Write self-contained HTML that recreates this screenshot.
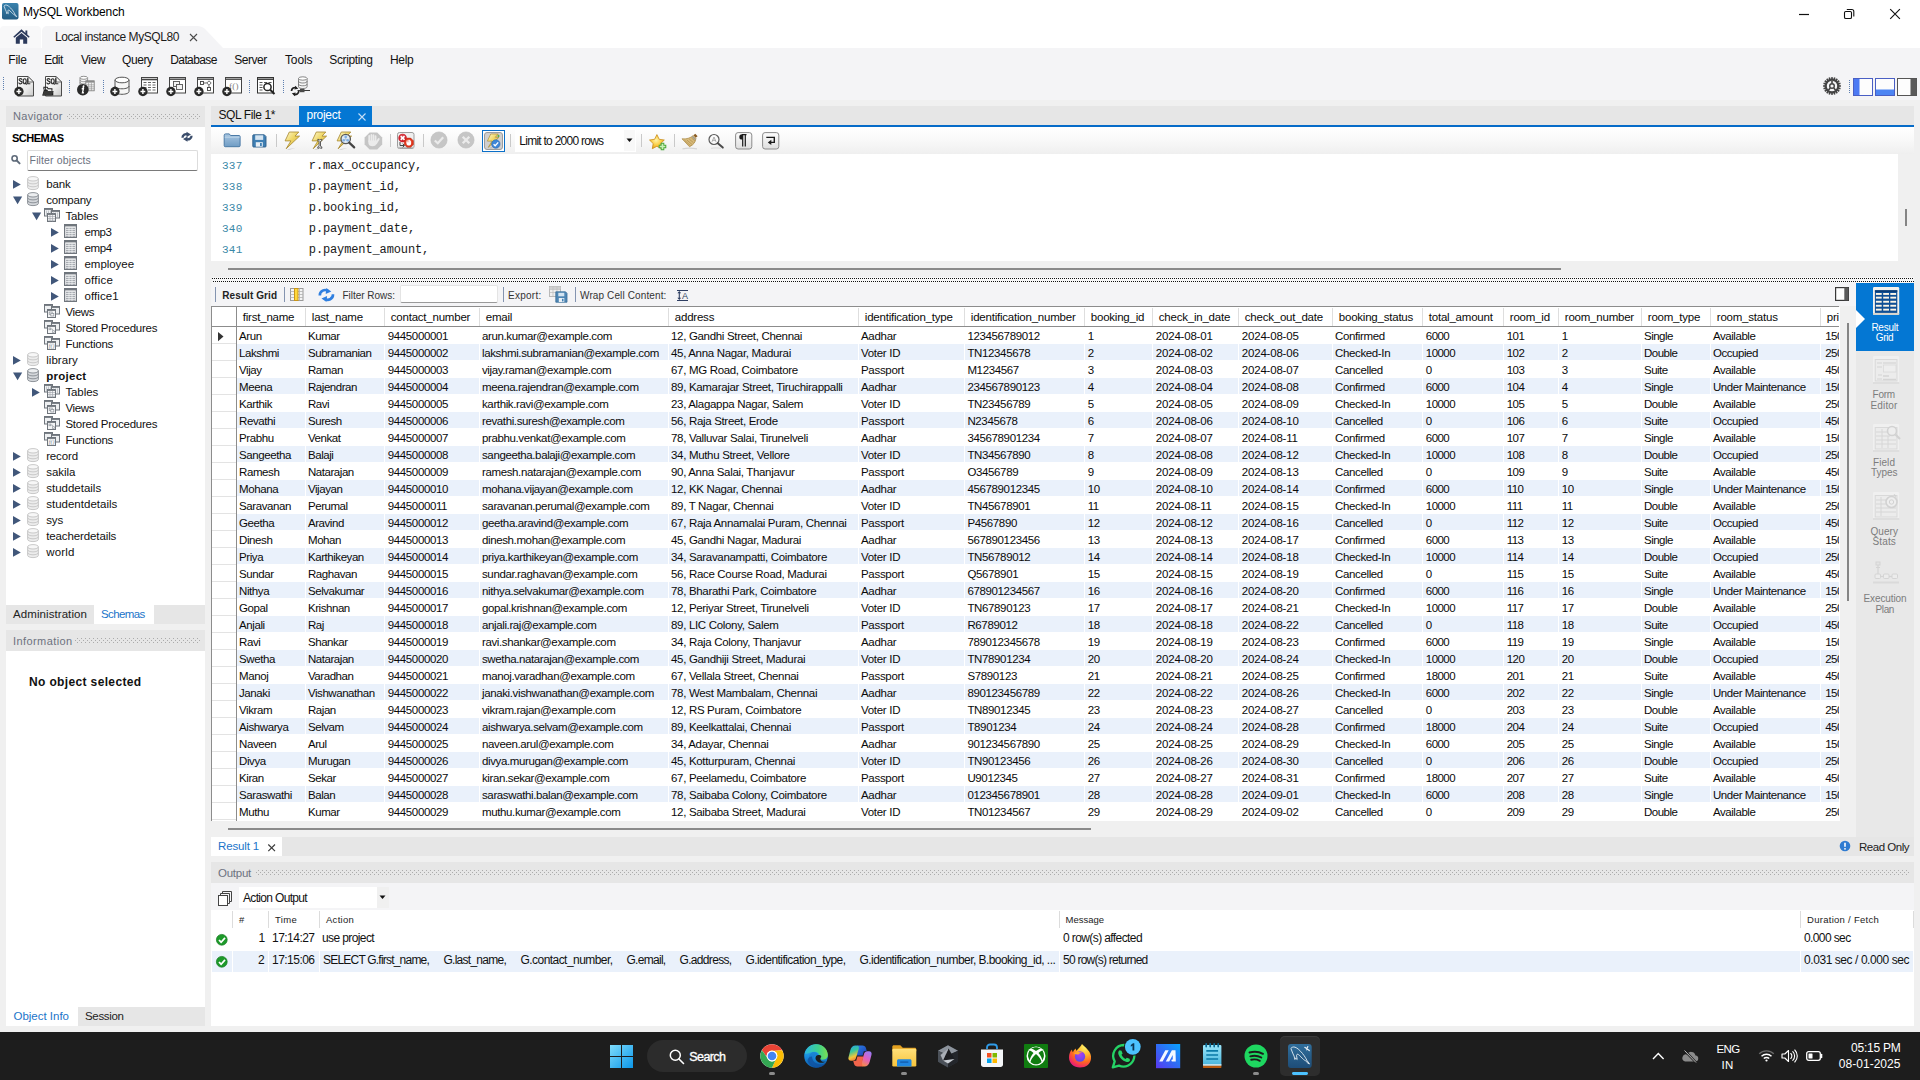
<!DOCTYPE html>
<html lang="en"><head><meta charset="utf-8"><title>MySQL Workbench</title>
<style>
html,body{margin:0;padding:0;}
body{width:1920px;height:1080px;overflow:hidden;position:relative;background:#f0f0f0;font-family:"Liberation Sans",sans-serif;font-size:12px;color:#111;}
.sec,.sec div,.sec span,.sec svg{position:absolute;}
.sec{left:0;top:0;width:0;height:0;}
#grid,.gr,.hr{left:0;top:0;width:0;height:0;}
.t{white-space:pre;}
.g{font-size:11.5px;line-height:15px;color:#0a0a0a;letter-spacing:-0.22px;}
.k0{letter-spacing:-0.4px}.k1{letter-spacing:-0.45px}.k2{letter-spacing:-0.38px}.k3{letter-spacing:-0.38px}.k4{letter-spacing:-0.32px}.k5{letter-spacing:-0.3px}.k6{letter-spacing:-0.36px}.k7{letter-spacing:-0.5px}.k8{letter-spacing:-0.2px}.k9{letter-spacing:-0.2px}.k10{letter-spacing:-0.36px}.k11{letter-spacing:-0.55px}.k12{letter-spacing:-0.6px}.k13{letter-spacing:-0.5px}.k14{letter-spacing:-0.52px}.k15{letter-spacing:-0.45px}.k16{letter-spacing:-0.5px}
svg{overflow:visible;}
</style></head>
<body>
<div class="sec" id="titlebar">
<div style="left:0px;top:0px;width:1920px;height:48px;background:#ffffff;"></div>
<svg style="left:2px;top:3px;" width="17" height="17" viewBox="0 0 17 17"><defs><linearGradient id="gapp" x1="0" y1="0" x2="0" y2="1"><stop offset="0" stop-color="#3a82ad"/><stop offset="1" stop-color="#235d84"/></linearGradient></defs><rect x="0" y="0" width="16.500" height="16.500" rx="2" fill="url(#gapp)"/><path transform="scale(.6875)" d="M2.900 4.400C4 3 5.500 2.700 7 3.200c2.500.8 5 3.300 7.500 6.300 2 2.500 3.500 5 4.500 7l2.500 3.500-2.200-1.200-.5-1.600c-1.300-.2-2.800-1.200-4.600-3-1.700-1.900-3.200-3.400-4.700-4.200l-1 1.500.7 4-1.700-1.500-.6 1.500c-.4-2.500-1.100-4.500-2.200-6.400C4 7.500 3.500 6 2.900 4.400z" fill="none" stroke="#e3edf4" stroke-width="1.100" stroke-linejoin="round"/></svg>
<span class="t" style="left:23px;top:4px;font-size:12px;line-height:16px;color:#000;letter-spacing:-0.12px;">MySQL Workbench</span>
<svg style="left:1790px;top:4px;" width="120" height="20" viewBox="0 0 120 20"><path d="M9 10.500h10" stroke="#111" stroke-width="1.200" fill="none"/><rect x="54.500" y="7.500" width="7" height="7" rx="1.300" fill="none" stroke="#111" stroke-width="1.100"/><path d="M56.800 5.500h5a2 2 0 0 1 2 2v5" fill="none" stroke="#111" stroke-width="1.100"/><path d="M100.200 5.200l9.700 9.700M109.900 5.200l-9.700 9.700" stroke="#111" stroke-width="1.150" fill="none"/></svg>
</div>
<div class="sec" id="tabrow">
<div style="left:0px;top:26px;width:41px;height:22px;background:#f8f8f9;border-radius:4px 4px 0 0;"></div>
<svg style="left:11.8px;top:27.5px;" width="19" height="17" viewBox="0 0 18 16"><path d="M9 1.200 1.200 8.200l1 1.100L9 3.400l6.800 5.900 1-1.100-2.300-2V2.300h-1.800v2.300z" fill="#2c3a5c"/><path d="M3.600 9.100 9 4.600l5.400 4.500v5.700h-3.800v-3.900H7.400v3.900H3.600z" fill="#2c3a5c"/></svg>
<svg style="left:42px;top:26px;" width="184" height="22" viewBox="0 0 184 22"><path d="M0 22V5a5 5 0 0 1 5-5h150c4 0 6 1 9 4l17 18z" fill="#f4f4f6"/></svg>
<span class="t" style="left:55px;top:29px;font-size:12px;line-height:16px;color:#1b1b1b;letter-spacing:-0.43px;">Local instance MySQL80</span>
<svg style="left:188px;top:31px;" width="12" height="12" viewBox="0 0 12 12"><path d="M2 3l7 7M9 3l-7 7" stroke="#4a4a4a" stroke-width="1.100" fill="none"/></svg>
</div>
<div class="sec" id="menubar">
<div style="left:0px;top:48px;width:1920px;height:52px;background:#f4f4f6;"></div>
<span class="t" style="left:8.3px;top:52px;font-size:12px;line-height:16px;color:#111;letter-spacing:-0.23px;">File</span>
<span class="t" style="left:44.3px;top:52px;font-size:12px;line-height:16px;color:#111;letter-spacing:-0.57px;">Edit</span>
<span class="t" style="left:81px;top:52px;font-size:12px;line-height:16px;color:#111;letter-spacing:-0.45px;">View</span>
<span class="t" style="left:122px;top:52px;font-size:12px;line-height:16px;color:#111;letter-spacing:-0.4px;">Query</span>
<span class="t" style="left:170.3px;top:52px;font-size:12px;line-height:16px;color:#111;letter-spacing:-0.62px;">Database</span>
<span class="t" style="left:234.3px;top:52px;font-size:12px;line-height:16px;color:#111;letter-spacing:-0.49px;">Server</span>
<span class="t" style="left:285px;top:52px;font-size:12px;line-height:16px;color:#111;letter-spacing:-0.14px;">Tools</span>
<span class="t" style="left:329.3px;top:52px;font-size:12px;line-height:16px;color:#111;letter-spacing:-0.37px;">Scripting</span>
<span class="t" style="left:390px;top:52px;font-size:12px;line-height:16px;color:#111;letter-spacing:-0.34px;">Help</span>
</div>
<div class="sec" id="toolbar">
<div style="left:3px;top:77px;width:1px;height:13px;border-left:1px dotted #5d7fb0;"></div>
<div style="left:69px;top:80px;width:1px;height:13px;border-left:1px dotted #5d7fb0;"></div>
<div style="left:103px;top:80px;width:1px;height:13px;border-left:1px dotted #5d7fb0;"></div>
<div style="left:249px;top:80px;width:1px;height:13px;border-left:1px dotted #5d7fb0;"></div>
<div style="left:283px;top:80px;width:1px;height:13px;border-left:1px dotted #5d7fb0;"></div>
<svg style="left:14px;top:75px;" width="22" height="23" viewBox="0 0 22 23"><defs><linearGradient id="gdoc" x1="0" y1="0" x2="1" y2="1"><stop offset="0" stop-color="#ffffff"/><stop offset=".6" stop-color="#ececec"/><stop offset="1" stop-color="#c9c9c9"/></linearGradient></defs><path d="M3.5 1.500h10.500l5.500 5.500v14h-16z" fill="url(#gdoc)" stroke="#4a4a4a" stroke-width="1"/><path d="M14.0 1.500v5.500h5.500z" fill="#f6f6f6" stroke="#4a4a4a" stroke-width=".8" stroke-linejoin="round"/><g transform="translate(4.8 3.500)" fill="none" stroke="#2e2e2e" stroke-width="1.150" stroke-linecap="round" stroke-linejoin="round"><path d="M3.100 .9C2.700 .3 2.200 .1 1.600 .1 .8 .1 .3 .6 .3 1.300c0 1.700 3 1 3 2.800 0 .8-.7 1.200-1.600 1.200-.7 0-1.300-.3-1.600-.9"/><ellipse cx="5.900" cy="2.700" rx="1.500" ry="2.500"/><path d="M6.500 4.300l1.100 1.400"/><path d="M8.900 .1v5.100h2.200"/></g><circle cx="4.9" cy="16.5" r="4.7" fill="#2a2a2a"/><path d="M2.5000000000000004 16.5h4.8M4.9 14.1v4.800" stroke="#fff" stroke-width="1.4"/></svg>
<svg style="left:42px;top:75px;" width="22" height="23" viewBox="0 0 22 23"><defs><linearGradient id="gdoc" x1="0" y1="0" x2="1" y2="1"><stop offset="0" stop-color="#ffffff"/><stop offset=".6" stop-color="#ececec"/><stop offset="1" stop-color="#c9c9c9"/></linearGradient></defs><path d="M3.5 1.500h10.500l5.500 5.500v14h-16z" fill="url(#gdoc)" stroke="#4a4a4a" stroke-width="1"/><path d="M14.0 1.500v5.500h5.500z" fill="#f6f6f6" stroke="#4a4a4a" stroke-width=".8" stroke-linejoin="round"/><g transform="translate(4.8 3.500)" fill="none" stroke="#2e2e2e" stroke-width="1.150" stroke-linecap="round" stroke-linejoin="round"><path d="M3.100 .9C2.700 .3 2.200 .1 1.600 .1 .8 .1 .3 .6 .3 1.300c0 1.700 3 1 3 2.800 0 .8-.7 1.200-1.600 1.200-.7 0-1.300-.3-1.600-.9"/><ellipse cx="5.900" cy="2.700" rx="1.500" ry="2.500"/><path d="M6.500 4.300l1.100 1.400"/><path d="M8.900 .1v5.100h2.200"/></g><path d="M.3 20.500l1.600-6h3.300l.9 1.400h5.200v4.600z" fill="#222"/><path d="M1.900 14.500v-2.300h3.300l.9 1.500h3.800v2" fill="none" stroke="#222" stroke-width="1.100"/><path d="M.3 20.500l2.200-4.500h9l-2 4.500z" fill="#3a3a3a"/></svg>
<svg style="left:76px;top:75px;" width="22" height="23" viewBox="0 0 22 23"><path d="M4 2.800v6.500c0 1 1.700 1.700 3.800 1.700s3.800-.7 3.800-1.700V2.800" fill="#f6f6f6" stroke="#777" stroke-width=".8"/><path d="M4 5c0 1 1.700 1.700 3.800 1.700s3.800-.7 3.800-1.700M4 7.200c0 1 1.700 1.700 3.800 1.700s3.800-.7 3.800-1.700" fill="none" stroke="#777" stroke-width=".7"/><ellipse cx="7.800" cy="2.800" rx="3.800" ry="1.500" fill="#fff" stroke="#777" stroke-width=".8"/><rect x="9.800" y="5.800" width="8.400" height="10" fill="#f4f4f4" stroke="#777" stroke-width=".8"/><rect x="9.800" y="5.800" width="8.400" height="1.800" fill="#8a8a8a"/><path d="M9.800 9.800h8.400M9.800 11.800h8.400M9.800 13.800h8.400M12.600 7.600v8.200M15.400 7.600v8.200" stroke="#8a8a8a" stroke-width=".6"/><circle cx="6.800" cy="14.700" r="5.800" fill="#2a2a2a"/><path d="M7.600 11l-.3 1.200" stroke="#fff" stroke-width="1.700" stroke-linecap="round"/><path d="M5.700 13.800h1.700l-.9 3.900h1.400" fill="none" stroke="#fff" stroke-width="1.400"/></svg>
<svg style="left:110px;top:75px;" width="22" height="23" viewBox="0 0 22 23"><path d="M5 5v11.500c0 1.600 3 2.800 7 2.800s7-1.200 7-2.800V5" fill="#f6f6f6" stroke="#555" stroke-width="1"/><ellipse cx="12" cy="5" rx="7" ry="2.800" fill="#fff" stroke="#555" stroke-width="1"/><path d="M5 11c0 1.600 3 2.800 7 2.800s7-1.200 7-2.800" fill="none" stroke="#555" stroke-width="1"/><circle cx="4.9" cy="16.5" r="4.7" fill="#2a2a2a"/><path d="M2.5000000000000004 16.5h4.8M4.9 14.1v4.800" stroke="#fff" stroke-width="1.4"/></svg>
<svg style="left:138px;top:75px;" width="22" height="23" viewBox="0 0 22 23"><rect x="3.500" y="2.500" width="16" height="15.500" fill="#fff" stroke="#444" stroke-width="1"/><path d="M3.500 4.500h16" stroke="#444" stroke-width="1.600"/><path d="M5.500 7.500h3M10 7.500h3M14.500 7.500h3M5.500 10h3M10 10h3M14.500 10h3M5.500 12.500h3M10 12.500h3M14.500 12.500h3M5.500 15h3M10 15h3M14.500 15h3" stroke="#666" stroke-width="1"/><circle cx="4.9" cy="16.5" r="4.7" fill="#2a2a2a"/><path d="M2.5000000000000004 16.5h4.8M4.9 14.1v4.800" stroke="#fff" stroke-width="1.4"/></svg>
<svg style="left:166px;top:75px;" width="22" height="23" viewBox="0 0 22 23"><rect x="3.500" y="2.500" width="16" height="15.500" fill="#fff" stroke="#444" stroke-width="1"/><path d="M3.500 4.200h16" stroke="#444" stroke-width="1.400"/><rect x="7.500" y="6.500" width="6" height="5" fill="#f4f4f4" stroke="#555" stroke-width=".9"/><rect x="10.500" y="9.500" width="6" height="5" fill="#f4f4f4" stroke="#555" stroke-width=".9"/><circle cx="4.9" cy="16.5" r="4.7" fill="#2a2a2a"/><path d="M2.5000000000000004 16.5h4.8M4.9 14.1v4.800" stroke="#fff" stroke-width="1.4"/></svg>
<svg style="left:194px;top:75px;" width="22" height="23" viewBox="0 0 22 23"><rect x="3.500" y="2.500" width="16" height="15.500" fill="#fff" stroke="#444" stroke-width="1"/><path d="M3.500 4.200h16" stroke="#444" stroke-width="1.400"/><rect x="6.500" y="6.500" width="3" height="3" fill="#fff" stroke="#444" stroke-width=".9"/><rect x="13.500" y="12.500" width="3" height="3" fill="#fff" stroke="#444" stroke-width=".9"/><path d="M15 5.800l2.200 2.200-2.200 2.200-2.200-2.200z" fill="#fff" stroke="#444" stroke-width=".8"/><path d="M9.500 8h3.300M15 10.200v2.300" stroke="#444" stroke-width=".8"/><circle cx="4.9" cy="16.5" r="4.7" fill="#2a2a2a"/><path d="M2.5000000000000004 16.5h4.8M4.9 14.1v4.800" stroke="#fff" stroke-width="1.4"/></svg>
<svg style="left:222px;top:75px;" width="22" height="23" viewBox="0 0 22 23"><rect x="3.500" y="2.500" width="16" height="15.500" fill="#fff" stroke="#444" stroke-width="1"/><path d="M3.500 4.200h16" stroke="#444" stroke-width="1.400"/><text x="7" y="14" font-family="Liberation Serif" font-size="9" fill="#808080" opacity=".99" textLength="9.500">f()</text><circle cx="4.9" cy="16.5" r="4.7" fill="#2a2a2a"/><path d="M2.5000000000000004 16.5h4.8M4.9 14.1v4.800" stroke="#fff" stroke-width="1.4"/></svg>
<svg style="left:256px;top:75px;" width="22" height="23" viewBox="0 0 22 23"><rect x="1.500" y="2.500" width="16" height="15.500" fill="#fff" stroke="#333" stroke-width="1"/><path d="M1.500 4.200h16" stroke="#333" stroke-width="1.400"/><path d="M3.500 7.500h3M8 7.500h3M12.500 7.500h3M3.500 10h3M3.500 12.500h3M3.500 15h3" stroke="#555" stroke-width="1"/><circle cx="11.500" cy="12" r="3.600" fill="#fff" stroke="#222" stroke-width="1.500"/><path d="M14.200 14.700l4.300 4.300" stroke="#222" stroke-width="2"/></svg>
<svg style="left:289px;top:75px;" width="22" height="23" viewBox="0 0 22 23"><path d="M9.500 3.500v8.300c0 1 2 1.700 4.300 1.700s4.300-.7 4.300-1.700V3.500" fill="#f6f6f6" stroke="#6a6a6a" stroke-width=".8"/><path d="M9.500 6.300c0 1 2 1.700 4.300 1.700s4.300-.7 4.300-1.700M9.500 9.100c0 1 2 1.700 4.300 1.700s4.300-.7 4.300-1.700" fill="none" stroke="#6a6a6a" stroke-width=".8"/><ellipse cx="13.800" cy="3.500" rx="4.300" ry="1.700" fill="#fff" stroke="#6a6a6a" stroke-width=".8"/><path d="M9.500 15.500h11.500" stroke="#3a3a3a" stroke-width="1"/><path d="M11 13.800h4.500v3.400H11z" fill="#4a4a4a"/><path d="M11 15.500l-2.500 0" stroke="#3a3a3a" stroke-width="1"/><path d="M2.500 16a3.600 3.600 0 0 1 5-3.200M9.800 16a3.600 3.600 0 0 1-5 3.300" fill="none" stroke="#222" stroke-width="1.700"/><path d="M6.300 10.800l3 2.900-3.900.8zM5.800 21.200l-3-2.900 3.900-.8z" fill="#222"/></svg>
<svg style="left:1822px;top:76px;" width="20" height="20" viewBox="0 0 20 20"><rect x="9.200" y="1.100" width="1.600" height="3" fill="#444" transform="rotate(0.0 10 10)"/><rect x="9.200" y="1.100" width="1.600" height="3" fill="#444" transform="rotate(18.0 10 10)"/><rect x="9.200" y="1.100" width="1.600" height="3" fill="#444" transform="rotate(36.0 10 10)"/><rect x="9.200" y="1.100" width="1.600" height="3" fill="#444" transform="rotate(54.0 10 10)"/><rect x="9.200" y="1.100" width="1.600" height="3" fill="#444" transform="rotate(72.0 10 10)"/><rect x="9.200" y="1.100" width="1.600" height="3" fill="#444" transform="rotate(90.0 10 10)"/><rect x="9.200" y="1.100" width="1.600" height="3" fill="#444" transform="rotate(108.0 10 10)"/><rect x="9.200" y="1.100" width="1.600" height="3" fill="#444" transform="rotate(126.0 10 10)"/><rect x="9.200" y="1.100" width="1.600" height="3" fill="#444" transform="rotate(144.0 10 10)"/><rect x="9.200" y="1.100" width="1.600" height="3" fill="#444" transform="rotate(162.0 10 10)"/><rect x="9.200" y="1.100" width="1.600" height="3" fill="#444" transform="rotate(180.0 10 10)"/><rect x="9.200" y="1.100" width="1.600" height="3" fill="#444" transform="rotate(198.0 10 10)"/><rect x="9.200" y="1.100" width="1.600" height="3" fill="#444" transform="rotate(216.0 10 10)"/><rect x="9.200" y="1.100" width="1.600" height="3" fill="#444" transform="rotate(234.0 10 10)"/><rect x="9.200" y="1.100" width="1.600" height="3" fill="#444" transform="rotate(252.0 10 10)"/><rect x="9.200" y="1.100" width="1.600" height="3" fill="#444" transform="rotate(270.0 10 10)"/><rect x="9.200" y="1.100" width="1.600" height="3" fill="#444" transform="rotate(288.0 10 10)"/><rect x="9.200" y="1.100" width="1.600" height="3" fill="#444" transform="rotate(306.0 10 10)"/><rect x="9.200" y="1.100" width="1.600" height="3" fill="#444" transform="rotate(324.0 10 10)"/><rect x="9.200" y="1.100" width="1.600" height="3" fill="#444" transform="rotate(342.0 10 10)"/><circle cx="10" cy="10" r="6.300" fill="none" stroke="#444" stroke-width="2.200"/><circle cx="10" cy="10" r="2.300" fill="none" stroke="#444" stroke-width="1.400"/><path d="M10 5v2.500M6.200 14.600l2-2.600M13.800 14.600l-2-2.600" stroke="#444" stroke-width="1.600"/></svg>
<div style="left:1849px;top:80px;width:1px;height:13px;border-left:1px dotted #5d7fb0;"></div>
<svg style="left:1853px;top:78px;" width="64" height="18" viewBox="0 0 64 18"><rect x=".5" y=".5" width="19" height="17" fill="#fdfdfd" stroke="#4a5fc4" stroke-width="1"/><rect x="1" y="1" width="5.500" height="16" fill="#4d7af3"/><rect x="22.500" y=".5" width="19" height="17" fill="#fdfdfd" stroke="#4a5fc4" stroke-width="1"/><rect x="23" y="11.500" width="18" height="5.500" fill="#4d85f3"/><rect x="44.500" y=".5" width="19" height="17" fill="#fdfdfd" stroke="#555" stroke-width="1"/><rect x="57.500" y="1" width="6" height="16" fill="#5a5a5a"/></svg>
</div>
<div class="sec" id="sidebar">
<div style="left:6px;top:106px;width:199px;height:21px;background:#e6e6e6;"></div>
<span class="t" style="left:13px;top:109px;font-size:11px;line-height:14px;color:#6d7280;letter-spacing:0.3px;">Navigator</span>
<div style="left:69px;top:114px;width:132px;height:1px;background:repeating-linear-gradient(90deg,#ababab 0 1px,transparent 1px 4px);"></div><div style="left:67px;top:116px;width:134px;height:1px;background:repeating-linear-gradient(90deg,#ababab 0 1px,transparent 1px 4px);"></div><div style="left:69px;top:118px;width:132px;height:1px;background:repeating-linear-gradient(90deg,#ababab 0 1px,transparent 1px 4px);"></div>
<div style="left:6px;top:127px;width:199px;height:478px;background:#ffffff;"></div>
<span class="t" style="left:12px;top:131px;font-size:11px;line-height:14px;font-weight:bold;color:#000;letter-spacing:-0.5px;">SCHEMAS</span>
<svg style="left:181px;top:132px;" width="13" height="10" viewBox="0 0 13 10"><path d="M1.500 5.800a3.600 3.600 0 0 1 5-3.400M10.500 3.700a3.600 3.600 0 0 1-5 3.400" fill="none" stroke="#3b4d6b" stroke-width="2.300"/><path d="M5.500 -.3l4.500 2.800-4.500 2.600zM6.500 9.800l-4.500-2.800 4.500-2.600z" fill="#3b4d6b"/></svg>
<svg style="left:10px;top:154px;" width="11" height="11" viewBox="0 0 11 11"><circle cx="4.600" cy="4.400" r="2.600" fill="none" stroke="#5f6b7a" stroke-width="1.600"/><path d="M6.700 6.500l2.900 2.900" stroke="#5f6b7a" stroke-width="1.900" stroke-linecap="round"/></svg>
<div style="left:27px;top:150px;width:171px;height:21px;background:#fff;box-sizing:border-box;border:1px solid #dcdcdc;border-bottom:1.500px solid #7a7a7a;border-radius:2px;"></div>
<span class="t" style="left:29.6px;top:153px;font-size:10.5px;line-height:14px;color:#6b7280;letter-spacing:0.13px;">Filter objects</span>
<svg style="left:13px;top:180px;" width="8" height="9" viewBox="0 0 8 9"><path d="M0 0l7.800 4.400L0 8.800z" fill="#41577a"/></svg>
<svg style="left:27px;top:176px;" width="12" height="14" viewBox="0 0 12 14"><path d="M.6 2.800v8.600c0 1.200 2.400 2.200 5.400 2.200s5.400-1 5.400-2.200V2.800" fill="#ececec" stroke="#c4c4c4" stroke-width=".9"/><path d="M.6 5.700c0 1.200 2.400 2.200 5.400 2.200s5.400-1 5.400-2.200M.6 8.600c0 1.200 2.400 2.200 5.400 2.200s5.400-1 5.400-2.200" fill="none" stroke="#c4c4c4" stroke-width=".9"/><ellipse cx="6" cy="2.800" rx="5.400" ry="2.200" fill="#f7f7f7" stroke="#c4c4c4" stroke-width=".9"/></svg>
<span class="t" style="left:46.2px;top:177px;font-size:11.5px;line-height:15px;color:#111;letter-spacing:-0.11px;">bank</span>
<svg style="left:13px;top:196px;" width="10" height="9" viewBox="0 0 10 9"><path d="M0 .5h9.200L4.600 8.300z" fill="#41577a"/></svg>
<svg style="left:27px;top:192px;" width="12" height="14" viewBox="0 0 12 14"><path d="M.6 2.800v8.600c0 1.200 2.400 2.200 5.400 2.200s5.400-1 5.400-2.200V2.800" fill="#d3d6da" stroke="#858a91" stroke-width=".9"/><path d="M.6 5.700c0 1.200 2.400 2.200 5.400 2.200s5.400-1 5.400-2.200M.6 8.600c0 1.200 2.400 2.200 5.400 2.200s5.400-1 5.400-2.200" fill="none" stroke="#858a91" stroke-width=".9"/><ellipse cx="6" cy="2.800" rx="5.400" ry="2.200" fill="#eceef0" stroke="#858a91" stroke-width=".9"/></svg>
<span class="t" style="left:46.2px;top:193px;font-size:11.5px;line-height:15px;color:#111;letter-spacing:-0.21px;">company</span>
<svg style="left:32px;top:212px;" width="10" height="9" viewBox="0 0 10 9"><path d="M0 .5h9.200L4.600 8.300z" fill="#41577a"/></svg>
<svg style="left:44px;top:208px;" width="16" height="14" viewBox="0 0 16 14"><rect x=".5" y=".5" width="8" height="7.500" fill="#eef0f2" stroke="#6f757c" stroke-width="1"/><path d="M.5 1.200h8" stroke="#6f757c" stroke-width="1.400"/><rect x="7.500" y="2.500" width="8" height="7.500" fill="#eef0f2" stroke="#6f757c" stroke-width="1"/><path d="M7.500 3.200h8" stroke="#6f757c" stroke-width="1.400"/><rect x="3.500" y="5.500" width="8" height="8" fill="#f4f5f6" stroke="#6f757c" stroke-width="1"/><path d="M3.500 6.200h8" stroke="#6f757c" stroke-width="1.400"/><path d="M2.500 2.500v5M4.500 2.500v3M6.500 2.500v3M9.500 4.500v1M11.500 4.500v1M13.500 4.500v5" stroke="#a3a8ae" stroke-width=".6"/><path d="M4 8.500h7M4 10.500h7M4 12.300h7M6 7v6.500M8.500 7v6.500" stroke="#9aa0a7" stroke-width=".6"/></svg>
<span class="t" style="left:65.4px;top:209px;font-size:11.5px;line-height:15px;color:#111;letter-spacing:-0.09px;">Tables</span>
<svg style="left:51px;top:228px;" width="8" height="9" viewBox="0 0 8 9"><path d="M0 0l7.800 4.400L0 8.800z" fill="#41577a"/></svg>
<svg style="left:64px;top:224px;" width="13" height="14" viewBox="0 0 13 14"><rect x=".6" y=".6" width="11.800" height="12.800" fill="#f5f6f7" stroke="#70767d" stroke-width="1.200"/><path d="M.6 1.500h11.800" stroke="#70767d" stroke-width="1.800"/><path d="M2 4.300h9M2 6.300h9M2 8.300h9M2 10.300h9M2 12.200h9" stroke="#8a8f96" stroke-width=".9"/><path d="M5 3.500v9.500M8 3.500v9.500" stroke="#f5f6f7" stroke-width=".7"/></svg>
<span class="t" style="left:84.5px;top:225px;font-size:11.5px;line-height:15px;color:#111;letter-spacing:-0.44px;">emp3</span>
<svg style="left:51px;top:244px;" width="8" height="9" viewBox="0 0 8 9"><path d="M0 0l7.800 4.400L0 8.800z" fill="#41577a"/></svg>
<svg style="left:64px;top:240px;" width="13" height="14" viewBox="0 0 13 14"><rect x=".6" y=".6" width="11.800" height="12.800" fill="#f5f6f7" stroke="#70767d" stroke-width="1.200"/><path d="M.6 1.500h11.800" stroke="#70767d" stroke-width="1.800"/><path d="M2 4.300h9M2 6.300h9M2 8.300h9M2 10.300h9M2 12.200h9" stroke="#8a8f96" stroke-width=".9"/><path d="M5 3.500v9.500M8 3.500v9.500" stroke="#f5f6f7" stroke-width=".7"/></svg>
<span class="t" style="left:84.5px;top:241px;font-size:11.5px;line-height:15px;color:#111;letter-spacing:-0.39px;">emp4</span>
<svg style="left:51px;top:260px;" width="8" height="9" viewBox="0 0 8 9"><path d="M0 0l7.800 4.400L0 8.800z" fill="#41577a"/></svg>
<svg style="left:64px;top:256px;" width="13" height="14" viewBox="0 0 13 14"><rect x=".6" y=".6" width="11.800" height="12.800" fill="#f5f6f7" stroke="#70767d" stroke-width="1.200"/><path d="M.6 1.500h11.800" stroke="#70767d" stroke-width="1.800"/><path d="M2 4.300h9M2 6.300h9M2 8.300h9M2 10.300h9M2 12.200h9" stroke="#8a8f96" stroke-width=".9"/><path d="M5 3.500v9.500M8 3.500v9.500" stroke="#f5f6f7" stroke-width=".7"/></svg>
<span class="t" style="left:84.5px;top:257px;font-size:11.5px;line-height:15px;color:#111;letter-spacing:-0.04px;">employee</span>
<svg style="left:51px;top:276px;" width="8" height="9" viewBox="0 0 8 9"><path d="M0 0l7.800 4.400L0 8.800z" fill="#41577a"/></svg>
<svg style="left:64px;top:272px;" width="13" height="14" viewBox="0 0 13 14"><rect x=".6" y=".6" width="11.800" height="12.800" fill="#f5f6f7" stroke="#70767d" stroke-width="1.200"/><path d="M.6 1.500h11.800" stroke="#70767d" stroke-width="1.800"/><path d="M2 4.300h9M2 6.300h9M2 8.300h9M2 10.300h9M2 12.200h9" stroke="#8a8f96" stroke-width=".9"/><path d="M5 3.500v9.500M8 3.500v9.500" stroke="#f5f6f7" stroke-width=".7"/></svg>
<span class="t" style="left:84.5px;top:273px;font-size:11.5px;line-height:15px;color:#111;letter-spacing:0.2px;">office</span>
<svg style="left:51px;top:292px;" width="8" height="9" viewBox="0 0 8 9"><path d="M0 0l7.800 4.400L0 8.800z" fill="#41577a"/></svg>
<svg style="left:64px;top:288px;" width="13" height="14" viewBox="0 0 13 14"><rect x=".6" y=".6" width="11.800" height="12.800" fill="#f5f6f7" stroke="#70767d" stroke-width="1.200"/><path d="M.6 1.500h11.800" stroke="#70767d" stroke-width="1.800"/><path d="M2 4.300h9M2 6.300h9M2 8.300h9M2 10.300h9M2 12.200h9" stroke="#8a8f96" stroke-width=".9"/><path d="M5 3.500v9.500M8 3.500v9.500" stroke="#f5f6f7" stroke-width=".7"/></svg>
<span class="t" style="left:84.5px;top:289px;font-size:11.5px;line-height:15px;color:#111;letter-spacing:0.08px;">office1</span>
<svg style="left:44px;top:304px;" width="16" height="14" viewBox="0 0 16 14"><rect x=".5" y=".5" width="8" height="7.500" fill="#eef0f2" stroke="#6f757c" stroke-width="1"/><path d="M.5 1.200h8" stroke="#6f757c" stroke-width="1.400"/><rect x="7.500" y="2.500" width="8" height="7.500" fill="#eef0f2" stroke="#6f757c" stroke-width="1"/><path d="M7.500 3.200h8" stroke="#6f757c" stroke-width="1.400"/><rect x="3.500" y="5.500" width="8" height="8" fill="#f4f5f6" stroke="#6f757c" stroke-width="1"/><path d="M3.500 6.200h8" stroke="#6f757c" stroke-width="1.400"/><rect x="5.200" y="8" width="3" height="2.500" fill="none" stroke="#8a9097" stroke-width=".7"/><rect x="6.800" y="9.500" width="3" height="2.500" fill="#f4f5f6" stroke="#8a9097" stroke-width=".7"/></svg>
<span class="t" style="left:65.4px;top:305px;font-size:11.5px;line-height:15px;color:#111;letter-spacing:-0.37px;">Views</span>
<svg style="left:44px;top:320px;" width="16" height="14" viewBox="0 0 16 14"><rect x=".5" y=".5" width="8" height="7.500" fill="#eef0f2" stroke="#6f757c" stroke-width="1"/><path d="M.5 1.200h8" stroke="#6f757c" stroke-width="1.400"/><rect x="7.500" y="2.500" width="8" height="7.500" fill="#eef0f2" stroke="#6f757c" stroke-width="1"/><path d="M7.500 3.200h8" stroke="#6f757c" stroke-width="1.400"/><rect x="3.500" y="5.500" width="8" height="8" fill="#f4f5f6" stroke="#6f757c" stroke-width="1"/><path d="M3.500 6.200h8" stroke="#6f757c" stroke-width="1.400"/><rect x="5" y="8" width="1.800" height="1.800" fill="none" stroke="#8a9097" stroke-width=".6"/><rect x="8.500" y="10.800" width="1.800" height="1.800" fill="none" stroke="#8a9097" stroke-width=".6"/><path d="M6.800 9h1.500l1 1.800" fill="none" stroke="#8a9097" stroke-width=".6"/></svg>
<span class="t" style="left:65.4px;top:321px;font-size:11.5px;line-height:15px;color:#111;letter-spacing:-0.24px;">Stored Procedures</span>
<svg style="left:44px;top:336px;" width="16" height="14" viewBox="0 0 16 14"><rect x=".5" y=".5" width="8" height="7.500" fill="#eef0f2" stroke="#6f757c" stroke-width="1"/><path d="M.5 1.200h8" stroke="#6f757c" stroke-width="1.400"/><rect x="7.500" y="2.500" width="8" height="7.500" fill="#eef0f2" stroke="#6f757c" stroke-width="1"/><path d="M7.500 3.200h8" stroke="#6f757c" stroke-width="1.400"/><rect x="3.500" y="5.500" width="8" height="8" fill="#f4f5f6" stroke="#6f757c" stroke-width="1"/><path d="M3.500 6.200h8" stroke="#6f757c" stroke-width="1.400"/><text x="4.800" y="12.300" font-family="Liberation Serif" font-style="italic" font-size="6" fill="#8a9097">f()</text></svg>
<span class="t" style="left:65.4px;top:337px;font-size:11.5px;line-height:15px;color:#111;letter-spacing:-0.24px;">Functions</span>
<svg style="left:13px;top:356px;" width="8" height="9" viewBox="0 0 8 9"><path d="M0 0l7.800 4.400L0 8.800z" fill="#41577a"/></svg>
<svg style="left:27px;top:352px;" width="12" height="14" viewBox="0 0 12 14"><path d="M.6 2.800v8.600c0 1.200 2.400 2.200 5.400 2.200s5.400-1 5.400-2.200V2.800" fill="#ececec" stroke="#c4c4c4" stroke-width=".9"/><path d="M.6 5.700c0 1.200 2.400 2.200 5.400 2.200s5.400-1 5.400-2.200M.6 8.600c0 1.200 2.400 2.200 5.400 2.200s5.400-1 5.400-2.200" fill="none" stroke="#c4c4c4" stroke-width=".9"/><ellipse cx="6" cy="2.800" rx="5.400" ry="2.200" fill="#f7f7f7" stroke="#c4c4c4" stroke-width=".9"/></svg>
<span class="t" style="left:46.2px;top:353px;font-size:11.5px;line-height:15px;color:#111;letter-spacing:0.06px;">library</span>
<svg style="left:13px;top:372px;" width="10" height="9" viewBox="0 0 10 9"><path d="M0 .5h9.200L4.600 8.300z" fill="#41577a"/></svg>
<svg style="left:27px;top:368px;" width="12" height="14" viewBox="0 0 12 14"><path d="M.6 2.800v8.600c0 1.200 2.400 2.200 5.400 2.200s5.400-1 5.400-2.200V2.800" fill="#d3d6da" stroke="#858a91" stroke-width=".9"/><path d="M.6 5.700c0 1.200 2.400 2.200 5.400 2.200s5.400-1 5.400-2.200M.6 8.600c0 1.200 2.400 2.200 5.400 2.200s5.400-1 5.400-2.200" fill="none" stroke="#858a91" stroke-width=".9"/><ellipse cx="6" cy="2.800" rx="5.400" ry="2.200" fill="#eceef0" stroke="#858a91" stroke-width=".9"/></svg>
<span class="t" style="left:46.2px;top:369px;font-size:11.5px;line-height:15px;font-weight:bold;color:#111;letter-spacing:0.27px;">project</span>
<svg style="left:32px;top:388px;" width="8" height="9" viewBox="0 0 8 9"><path d="M0 0l7.800 4.400L0 8.800z" fill="#41577a"/></svg>
<svg style="left:44px;top:384px;" width="16" height="14" viewBox="0 0 16 14"><rect x=".5" y=".5" width="8" height="7.500" fill="#eef0f2" stroke="#6f757c" stroke-width="1"/><path d="M.5 1.200h8" stroke="#6f757c" stroke-width="1.400"/><rect x="7.500" y="2.500" width="8" height="7.500" fill="#eef0f2" stroke="#6f757c" stroke-width="1"/><path d="M7.500 3.200h8" stroke="#6f757c" stroke-width="1.400"/><rect x="3.500" y="5.500" width="8" height="8" fill="#f4f5f6" stroke="#6f757c" stroke-width="1"/><path d="M3.500 6.200h8" stroke="#6f757c" stroke-width="1.400"/><path d="M2.500 2.500v5M4.500 2.500v3M6.500 2.500v3M9.500 4.500v1M11.500 4.500v1M13.500 4.500v5" stroke="#a3a8ae" stroke-width=".6"/><path d="M4 8.500h7M4 10.500h7M4 12.300h7M6 7v6.500M8.500 7v6.500" stroke="#9aa0a7" stroke-width=".6"/></svg>
<span class="t" style="left:65.4px;top:385px;font-size:11.5px;line-height:15px;color:#111;letter-spacing:-0.09px;">Tables</span>
<svg style="left:44px;top:400px;" width="16" height="14" viewBox="0 0 16 14"><rect x=".5" y=".5" width="8" height="7.500" fill="#eef0f2" stroke="#6f757c" stroke-width="1"/><path d="M.5 1.200h8" stroke="#6f757c" stroke-width="1.400"/><rect x="7.500" y="2.500" width="8" height="7.500" fill="#eef0f2" stroke="#6f757c" stroke-width="1"/><path d="M7.500 3.200h8" stroke="#6f757c" stroke-width="1.400"/><rect x="3.500" y="5.500" width="8" height="8" fill="#f4f5f6" stroke="#6f757c" stroke-width="1"/><path d="M3.500 6.200h8" stroke="#6f757c" stroke-width="1.400"/><rect x="5.200" y="8" width="3" height="2.500" fill="none" stroke="#8a9097" stroke-width=".7"/><rect x="6.800" y="9.500" width="3" height="2.500" fill="#f4f5f6" stroke="#8a9097" stroke-width=".7"/></svg>
<span class="t" style="left:65.4px;top:401px;font-size:11.5px;line-height:15px;color:#111;letter-spacing:-0.37px;">Views</span>
<svg style="left:44px;top:416px;" width="16" height="14" viewBox="0 0 16 14"><rect x=".5" y=".5" width="8" height="7.500" fill="#eef0f2" stroke="#6f757c" stroke-width="1"/><path d="M.5 1.200h8" stroke="#6f757c" stroke-width="1.400"/><rect x="7.500" y="2.500" width="8" height="7.500" fill="#eef0f2" stroke="#6f757c" stroke-width="1"/><path d="M7.500 3.200h8" stroke="#6f757c" stroke-width="1.400"/><rect x="3.500" y="5.500" width="8" height="8" fill="#f4f5f6" stroke="#6f757c" stroke-width="1"/><path d="M3.500 6.200h8" stroke="#6f757c" stroke-width="1.400"/><rect x="5" y="8" width="1.800" height="1.800" fill="none" stroke="#8a9097" stroke-width=".6"/><rect x="8.500" y="10.800" width="1.800" height="1.800" fill="none" stroke="#8a9097" stroke-width=".6"/><path d="M6.800 9h1.500l1 1.800" fill="none" stroke="#8a9097" stroke-width=".6"/></svg>
<span class="t" style="left:65.4px;top:417px;font-size:11.5px;line-height:15px;color:#111;letter-spacing:-0.24px;">Stored Procedures</span>
<svg style="left:44px;top:432px;" width="16" height="14" viewBox="0 0 16 14"><rect x=".5" y=".5" width="8" height="7.500" fill="#eef0f2" stroke="#6f757c" stroke-width="1"/><path d="M.5 1.200h8" stroke="#6f757c" stroke-width="1.400"/><rect x="7.500" y="2.500" width="8" height="7.500" fill="#eef0f2" stroke="#6f757c" stroke-width="1"/><path d="M7.500 3.200h8" stroke="#6f757c" stroke-width="1.400"/><rect x="3.500" y="5.500" width="8" height="8" fill="#f4f5f6" stroke="#6f757c" stroke-width="1"/><path d="M3.500 6.200h8" stroke="#6f757c" stroke-width="1.400"/><text x="4.800" y="12.300" font-family="Liberation Serif" font-style="italic" font-size="6" fill="#8a9097">f()</text></svg>
<span class="t" style="left:65.4px;top:433px;font-size:11.5px;line-height:15px;color:#111;letter-spacing:-0.24px;">Functions</span>
<svg style="left:13px;top:452px;" width="8" height="9" viewBox="0 0 8 9"><path d="M0 0l7.800 4.400L0 8.800z" fill="#41577a"/></svg>
<svg style="left:27px;top:448px;" width="12" height="14" viewBox="0 0 12 14"><path d="M.6 2.800v8.600c0 1.200 2.400 2.200 5.400 2.200s5.400-1 5.400-2.200V2.800" fill="#ececec" stroke="#c4c4c4" stroke-width=".9"/><path d="M.6 5.700c0 1.200 2.400 2.200 5.400 2.200s5.400-1 5.400-2.200M.6 8.600c0 1.200 2.400 2.200 5.400 2.200s5.400-1 5.400-2.200" fill="none" stroke="#c4c4c4" stroke-width=".9"/><ellipse cx="6" cy="2.800" rx="5.400" ry="2.200" fill="#f7f7f7" stroke="#c4c4c4" stroke-width=".9"/></svg>
<span class="t" style="left:46.2px;top:449px;font-size:11.5px;line-height:15px;color:#111;letter-spacing:-0.15px;">record</span>
<svg style="left:13px;top:468px;" width="8" height="9" viewBox="0 0 8 9"><path d="M0 0l7.800 4.400L0 8.800z" fill="#41577a"/></svg>
<svg style="left:27px;top:464px;" width="12" height="14" viewBox="0 0 12 14"><path d="M.6 2.800v8.600c0 1.200 2.400 2.200 5.400 2.200s5.400-1 5.400-2.200V2.800" fill="#ececec" stroke="#c4c4c4" stroke-width=".9"/><path d="M.6 5.700c0 1.200 2.400 2.200 5.400 2.200s5.400-1 5.400-2.200M.6 8.600c0 1.200 2.400 2.200 5.400 2.200s5.400-1 5.400-2.200" fill="none" stroke="#c4c4c4" stroke-width=".9"/><ellipse cx="6" cy="2.800" rx="5.400" ry="2.200" fill="#f7f7f7" stroke="#c4c4c4" stroke-width=".9"/></svg>
<span class="t" style="left:46.2px;top:465px;font-size:11.5px;line-height:15px;color:#111;letter-spacing:-0.05px;">sakila</span>
<svg style="left:13px;top:484px;" width="8" height="9" viewBox="0 0 8 9"><path d="M0 0l7.800 4.400L0 8.800z" fill="#41577a"/></svg>
<svg style="left:27px;top:480px;" width="12" height="14" viewBox="0 0 12 14"><path d="M.6 2.800v8.600c0 1.200 2.400 2.200 5.400 2.200s5.400-1 5.400-2.200V2.800" fill="#ececec" stroke="#c4c4c4" stroke-width=".9"/><path d="M.6 5.700c0 1.200 2.400 2.200 5.400 2.200s5.400-1 5.400-2.200M.6 8.600c0 1.200 2.400 2.200 5.400 2.200s5.400-1 5.400-2.200" fill="none" stroke="#c4c4c4" stroke-width=".9"/><ellipse cx="6" cy="2.800" rx="5.400" ry="2.200" fill="#f7f7f7" stroke="#c4c4c4" stroke-width=".9"/></svg>
<span class="t" style="left:46.2px;top:481px;font-size:11.5px;line-height:15px;color:#111;letter-spacing:0px;">studdetails</span>
<svg style="left:13px;top:500px;" width="8" height="9" viewBox="0 0 8 9"><path d="M0 0l7.800 4.400L0 8.800z" fill="#41577a"/></svg>
<svg style="left:27px;top:496px;" width="12" height="14" viewBox="0 0 12 14"><path d="M.6 2.800v8.600c0 1.200 2.400 2.200 5.400 2.200s5.400-1 5.400-2.200V2.800" fill="#ececec" stroke="#c4c4c4" stroke-width=".9"/><path d="M.6 5.700c0 1.200 2.400 2.200 5.400 2.200s5.400-1 5.400-2.200M.6 8.600c0 1.200 2.400 2.200 5.400 2.200s5.400-1 5.400-2.200" fill="none" stroke="#c4c4c4" stroke-width=".9"/><ellipse cx="6" cy="2.800" rx="5.400" ry="2.200" fill="#f7f7f7" stroke="#c4c4c4" stroke-width=".9"/></svg>
<span class="t" style="left:46.2px;top:497px;font-size:11.5px;line-height:15px;color:#111;letter-spacing:0.01px;">studentdetails</span>
<svg style="left:13px;top:516px;" width="8" height="9" viewBox="0 0 8 9"><path d="M0 0l7.800 4.400L0 8.800z" fill="#41577a"/></svg>
<svg style="left:27px;top:512px;" width="12" height="14" viewBox="0 0 12 14"><path d="M.6 2.800v8.600c0 1.200 2.400 2.200 5.400 2.200s5.400-1 5.400-2.200V2.800" fill="#ececec" stroke="#c4c4c4" stroke-width=".9"/><path d="M.6 5.700c0 1.200 2.400 2.200 5.400 2.200s5.400-1 5.400-2.200M.6 8.600c0 1.200 2.400 2.200 5.400 2.200s5.400-1 5.400-2.200" fill="none" stroke="#c4c4c4" stroke-width=".9"/><ellipse cx="6" cy="2.800" rx="5.400" ry="2.200" fill="#f7f7f7" stroke="#c4c4c4" stroke-width=".9"/></svg>
<span class="t" style="left:46.2px;top:513px;font-size:11.5px;line-height:15px;color:#111;letter-spacing:-0.12px;">sys</span>
<svg style="left:13px;top:532px;" width="8" height="9" viewBox="0 0 8 9"><path d="M0 0l7.800 4.400L0 8.800z" fill="#41577a"/></svg>
<svg style="left:27px;top:528px;" width="12" height="14" viewBox="0 0 12 14"><path d="M.6 2.800v8.600c0 1.200 2.400 2.200 5.400 2.200s5.400-1 5.400-2.200V2.800" fill="#ececec" stroke="#c4c4c4" stroke-width=".9"/><path d="M.6 5.700c0 1.200 2.400 2.200 5.400 2.200s5.400-1 5.400-2.200M.6 8.600c0 1.200 2.400 2.200 5.400 2.200s5.400-1 5.400-2.200" fill="none" stroke="#c4c4c4" stroke-width=".9"/><ellipse cx="6" cy="2.800" rx="5.400" ry="2.200" fill="#f7f7f7" stroke="#c4c4c4" stroke-width=".9"/></svg>
<span class="t" style="left:46.2px;top:529px;font-size:11.5px;line-height:15px;color:#111;letter-spacing:-0.11px;">teacherdetails</span>
<svg style="left:13px;top:548px;" width="8" height="9" viewBox="0 0 8 9"><path d="M0 0l7.800 4.400L0 8.800z" fill="#41577a"/></svg>
<svg style="left:27px;top:544px;" width="12" height="14" viewBox="0 0 12 14"><path d="M.6 2.800v8.600c0 1.200 2.400 2.200 5.400 2.200s5.400-1 5.400-2.200V2.800" fill="#ececec" stroke="#c4c4c4" stroke-width=".9"/><path d="M.6 5.700c0 1.200 2.400 2.200 5.400 2.200s5.400-1 5.400-2.200M.6 8.600c0 1.200 2.400 2.200 5.400 2.200s5.400-1 5.400-2.200" fill="none" stroke="#c4c4c4" stroke-width=".9"/><ellipse cx="6" cy="2.800" rx="5.400" ry="2.200" fill="#f7f7f7" stroke="#c4c4c4" stroke-width=".9"/></svg>
<span class="t" style="left:46.2px;top:545px;font-size:11.5px;line-height:15px;color:#111;letter-spacing:0.16px;">world</span>
<div style="left:6px;top:605px;width:199px;height:19px;background:#e6e6e6;"></div>
<div style="left:94px;top:605px;width:60px;height:19px;background:#ffffff;"></div>
<span class="t" style="left:13px;top:607px;font-size:11.5px;line-height:15px;color:#222;letter-spacing:0.08px;">Administration</span>
<span class="t" style="left:101px;top:607px;font-size:11.5px;line-height:15px;color:#1b74c9;letter-spacing:-0.63px;">Schemas</span>
<div style="left:6px;top:630px;width:199px;height:21px;background:#e6e6e6;"></div>
<span class="t" style="left:13px;top:634px;font-size:11px;line-height:14px;color:#6d7280;letter-spacing:0.41px;">Information</span>
<div style="left:77px;top:638px;width:124px;height:1px;background:repeating-linear-gradient(90deg,#ababab 0 1px,transparent 1px 4px);"></div><div style="left:75px;top:640px;width:126px;height:1px;background:repeating-linear-gradient(90deg,#ababab 0 1px,transparent 1px 4px);"></div><div style="left:77px;top:642px;width:124px;height:1px;background:repeating-linear-gradient(90deg,#ababab 0 1px,transparent 1px 4px);"></div>
<div style="left:6px;top:651px;width:199px;height:356px;background:#ffffff;"></div>
<span class="t" style="left:29px;top:674px;font-size:12px;line-height:16px;font-weight:bold;color:#111;letter-spacing:0.36px;">No object selected</span>
<div style="left:6px;top:1007px;width:199px;height:19px;background:#e6e6e6;"></div>
<div style="left:6px;top:1007px;width:72px;height:19px;background:#ffffff;"></div>
<span class="t" style="left:13.5px;top:1009px;font-size:11.5px;line-height:15px;color:#1b74c9;letter-spacing:-0.01px;">Object Info</span>
<span class="t" style="left:85px;top:1009px;font-size:11.5px;line-height:15px;color:#222;letter-spacing:-0.34px;">Session</span>
</div>
<div class="sec" id="main">
<div style="left:211px;top:106px;width:1703px;height:19px;background:#e6e6e6;"></div>
<span class="t" style="left:218.5px;top:107px;font-size:12px;line-height:16px;color:#111;letter-spacing:-0.4px;">SQL File 1*</span>
<div style="left:299px;top:106px;width:73px;height:20px;background:#0477d3;"></div>
<span class="t" style="left:306.5px;top:107px;font-size:12px;line-height:16px;color:#fff;letter-spacing:-0.29px;">project</span>
<svg style="left:356.5px;top:111.5px;" width="10" height="10" viewBox="0 0 10 10"><path d="M1.500 1.500l7 7M8.500 1.500l-7 7" stroke="#c4dff7" stroke-width="1.100" fill="none"/></svg>
<div style="left:211px;top:125px;width:1703px;height:2px;background:#066bc8;"></div>
<div style="left:211px;top:127px;width:1703px;height:27px;background:linear-gradient(#ffffff,#fafafa 40%,#efefef);"></div>
<svg style="left:223px;top:132px;" width="19" height="16" viewBox="0 0 19 16"><defs><linearGradient id="gfold" x1="0" y1="0" x2="0" y2="1"><stop offset="0" stop-color="#a9c7e2"/><stop offset="1" stop-color="#6f9cc4"/></linearGradient></defs><path d="M1.200 3.200c0-.8.500-1.300 1.300-1.300h3.800l1.200 1.600h8.600c.6 0 1 .4 1 1v9.200c0 .6-.4 1-1 1H2.200c-.6 0-1-.4-1-1z" fill="url(#gfold)" stroke="#4b7aa6" stroke-width="1"/><path d="M1.700 5.200h15" stroke="#c5daec" stroke-width=".8"/></svg>
<svg style="left:251.5px;top:134px;" width="15" height="14" viewBox="0 0 15 14"><path d="M.8 1.500c0-.4.300-.7.700-.7h10.800l1.700 1.700v9.800c0 .4-.3.700-.7.700H1.500c-.4 0-.7-.3-.7-.7z" fill="#3f7fb3" stroke="#2c5f8a" stroke-width=".9"/><rect x="3.200" y="1.300" width="8" height="4.600" fill="#d4e4f1"/><rect x="3.800" y="8.200" width="7" height="4.500" fill="#e8eff5"/><rect x="8" y="9" width="1.800" height="3" fill="#3f7fb3"/></svg>
<div style="left:276px;top:134px;width:1px;height:13px;background:#c9c9c9;"></div>
<div style="left:390px;top:134px;width:1px;height:13px;background:#c9c9c9;"></div>
<div style="left:423px;top:134px;width:1px;height:13px;background:#c9c9c9;"></div>
<div style="left:510px;top:134px;width:1px;height:13px;background:#c9c9c9;"></div>
<div style="left:641px;top:134px;width:1px;height:13px;background:#c9c9c9;"></div>
<div style="left:674px;top:134px;width:1px;height:13px;background:#c9c9c9;"></div>
<svg style="left:284px;top:131px;" width="17" height="19" viewBox="0 0 17 19"><defs><linearGradient id="gbolt" x1="0" y1="0" x2="1" y2="1"><stop offset="0" stop-color="#fff9d2"/><stop offset=".45" stop-color="#efd766"/><stop offset="1" stop-color="#cfa63a"/></linearGradient></defs><g transform="translate(0 0) scale(1.0)"><path d="M3 18.300l9-1.500-7 2.300z" fill="#000" opacity=".12"/><path d="M5.300 1h9.500L11 5.100h4.600L2.200 17.700 6.900 9.900H1.100z" fill="url(#gbolt)" stroke="#a6862e" stroke-width=".8" stroke-linejoin="round"/></g></svg>
<svg style="left:311px;top:131px;" width="17" height="19" viewBox="0 0 17 19"><g transform="translate(0 0) scale(1.0)"><path d="M3 18.300l9-1.500-7 2.300z" fill="#000" opacity=".12"/><path d="M5.300 1h9.500L11 5.100h4.600L2.200 17.700 6.900 9.900H1.100z" fill="url(#gbolt)" stroke="#a6862e" stroke-width=".8" stroke-linejoin="round"/></g><path d="M6.800 8.300c1 0 1.700.3 2 .8.300-.5 1-.8 2-.8v1.400c-.8 0-1.300.3-1.300.9v4.400c0 .6.500.9 1.300.9v1.400c-1 0-1.700-.3-2-.8-.3.5-1 .8-2 .8v-1.400c.8 0 1.300-.3 1.300-.9v-4.400c0-.6-.5-.9-1.300-.9z" fill="#fff" stroke="#333" stroke-width=".8"/></svg>
<svg style="left:336px;top:131px;" width="20" height="19" viewBox="0 0 20 19"><g transform="translate(0 0) scale(1.0)"><path d="M3 18.300l9-1.500-7 2.300z" fill="#000" opacity=".12"/><path d="M5.300 1h9.500L11 5.100h4.600L2.200 17.700 6.900 9.900H1.100z" fill="url(#gbolt)" stroke="#a6862e" stroke-width=".8" stroke-linejoin="round"/></g><circle cx="9.700" cy="8" r="4.700" fill="#dde9f5" stroke="#5a5a5a" stroke-width="1.300"/><circle cx="9.700" cy="5.900" r="1.300" fill="#7fb0e6"/><circle cx="7.700" cy="9.300" r="1.300" fill="#7fb0e6"/><circle cx="11.700" cy="9.300" r="1.300" fill="#7fb0e6"/><path d="M9.700 6.500v2M8.300 8.800l2.800 0" stroke="#9ab" stroke-width=".5"/><path d="M13.200 11.600l5 4.800" stroke="#444" stroke-width="2.200" stroke-linecap="round"/></svg>
<svg style="left:363.5px;top:131.5px;" width="19" height="18" viewBox="0 0 19 18"><path d="M5.600 .6h7.600l5 5v6.800l-5 5H5.600l-5-5V5.600z" fill="#c5c5c5"/><path d="M5.200 9.500V3.800M7.400 9V2.900M9.500 9V3.100M11.600 9.500V4.200" fill="none" stroke="#ebebeb" stroke-width="1.700" stroke-linecap="round"/><path d="M4.400 8.500h8.100v2.500c0 2-1.600 3.300-4 3.300s-4.100-1.300-4.100-3.300z" fill="#ebebeb"/><path d="M14.700 7l-2.600 4.200" stroke="#ebebeb" stroke-width="2" stroke-linecap="round"/></svg>
<svg style="left:397px;top:132px;" width="18" height="17" viewBox="0 0 18 17"><rect x=".5" y=".5" width="16.500" height="16" rx="2" fill="#efefef" stroke="#9d9d9d" stroke-width="1"/><path d="M.5 15.500h16.500" stroke="#bdbdbd" stroke-width="1.500"/><path d="M3 10v3.500h4M5.700 11.800l1.800 1.700-1.800 1.700" fill="none" stroke="#444" stroke-width="1"/><circle cx="5.600" cy="6" r="4.300" fill="#cf1f2a"/><circle cx="5.600" cy="4.800" r="2.800" fill="#e05a62" opacity=".5"/><path d="M3.700 4.100l3.800 3.800M7.500 4.100L3.700 7.900" stroke="#fff" stroke-width="1.500"/><path d="M10 6.100h3.700l2.700 2.700v3.700l-2.700 2.700H10l-2.700-2.700V8.800z" fill="#e2371d" stroke="#b3240f" stroke-width=".5"/><path d="M10 10.800V8.900M11.200 10.500V8.200M12.400 10.500V8.200M13.600 10.800V9" stroke="#fff" stroke-width="1" stroke-linecap="round"/><path d="M9.500 10.300h4.600v1.500c0 1.100-1 1.800-2.300 1.800s-2.300-.7-2.300-1.800z" fill="#fff"/></svg>
<svg style="left:429.5px;top:131px;" width="18" height="18" viewBox="0 0 18 18"><circle cx="9" cy="9" r="8.100" fill="#c6c6c6" stroke="#bcbcbc" stroke-width=".6"/><path d="M4.800 9.500l3 2.800 5.400-6" fill="none" stroke="#ebebeb" stroke-width="2.200"/></svg>
<svg style="left:456.5px;top:131px;" width="18" height="18" viewBox="0 0 18 18"><circle cx="9" cy="9" r="8.100" fill="#c6c6c6" stroke="#bcbcbc" stroke-width=".6"/><path d="M5.700 5.700l6.600 6.600M12.300 5.700l-6.600 6.600" fill="none" stroke="#ebebeb" stroke-width="2.300"/></svg>
<div style="left:482px;top:130px;width:23px;height:22px;background:#ffffff;box-sizing:border-box;border:1px solid #0a6fc8;"></div>
<svg style="left:484px;top:132px;" width="19" height="18" viewBox="0 0 19 18"><rect x=".5" y=".5" width="18" height="17" rx="2.500" fill="#cfcfcf" stroke="#9c9c9c" stroke-width="1"/><g transform="translate(2.5 1.2) scale(0.8)"><path d="M3 18.300l9-1.500-7 2.300z" fill="#000" opacity=".12"/><path d="M5.300 1h9.500L11 5.100h4.600L2.200 17.700 6.900 9.900H1.100z" fill="url(#gbolt)" stroke="#a6862e" stroke-width=".8" stroke-linejoin="round"/></g><circle cx="14.500" cy="4" r="1" fill="#4caf3a"/><circle cx="11.800" cy="12" r="4.200" fill="#3f87d8" stroke="#2a66b0" stroke-width=".6"/><path d="M9.600 12.200l1.600 1.600 3-3.400" fill="none" stroke="#fff" stroke-width="1.300"/></svg>
<div style="left:515px;top:129px;width:121px;height:23px;background:#ffffff;"></div>
<div style="left:624px;top:130px;width:11px;height:21px;background:#f8f8f8;"></div>
<span class="t" style="left:519.3px;top:133px;font-size:12px;line-height:16px;color:#111;letter-spacing:-0.74px;">Limit to 2000 rows</span>
<svg style="left:626px;top:138px;" width="8" height="5" viewBox="0 0 8 5"><path d="M.5 .5h6L3.500 4z" fill="#111"/></svg>
<svg style="left:648.5px;top:133.5px;" width="19" height="18" viewBox="0 0 19 18"><defs><radialGradient id="gstar" cx=".45" cy=".4" r=".65"><stop offset="0" stop-color="#fff3a8"/><stop offset=".55" stop-color="#fbcb3e"/><stop offset="1" stop-color="#e2951a"/></radialGradient></defs><path d="M7.900 .6l2.300 4.700 5.100.7-3.700 3.600.9 5.100-4.600-2.400-4.600 2.400.9-5.100L.5 6l5.100-.7z" fill="url(#gstar)" stroke="#c98d1c" stroke-width=".8" stroke-linejoin="round"/><path d="M13.500 8.700v7.600M9.700 12.500h7.600" stroke="#4aa63a" stroke-width="3.600"/><path d="M13.500 9.700v5.600M10.700 12.500h5.600" stroke="#c9f0b6" stroke-width="1.700"/></svg>
<svg style="left:681px;top:133px;" width="18" height="17" viewBox="0 0 18 17"><path d="M1.500 15.800c4-.8 10-.8 14.500 0" stroke="#000" stroke-width="1.200" opacity=".12" fill="none"/><path d="M12.500 2.300l1.800-1.600 2.300 2.500-1.900 1.500z" fill="#8a5a22"/><path d="M12.300 2.500l2.600 2.900c-.2 3.500-2.400 6.500-6.400 8.300L1 5.800c4.500.5 8.500-.8 11.300-3.300z" fill="#d8bb7c" stroke="#a8853e" stroke-width=".7" stroke-linejoin="round"/><path d="M3.500 7.200l6 5.500M5.800 7l5.300 4.500M8.300 6.200l4.200 3.500M10.500 5l3.300 2.800" stroke="#a8853e" stroke-width=".6"/><path d="M11.200 3.400l3.200 3.200" stroke="#9a9a9a" stroke-width="1.300"/></svg>
<svg style="left:708px;top:133px;" width="17" height="16" viewBox="0 0 17 16"><path d="M3 15.300c3-.5 7-.5 10 0" stroke="#000" stroke-width="1" opacity=".1" fill="none"/><circle cx="6" cy="6.500" r="5" fill="#fafafa" stroke="#5a5a5a" stroke-width="1.200"/><path d="M4 8.800L6 4l2 4.800M4.700 7.300h2.600" fill="none" stroke="#9a9a9a" stroke-width=".8"/><path d="M9.800 10.300l5 4.300" stroke="#4a4a4a" stroke-width="2" stroke-linecap="round"/></svg>
<svg style="left:735px;top:132px;" width="18" height="18" viewBox="0 0 18 18"><defs><linearGradient id="gbtn" x1="0" y1="0" x2="0" y2="1"><stop offset="0" stop-color="#fdfdfd"/><stop offset="1" stop-color="#dedede"/></linearGradient></defs><rect x=".6" y=".6" width="16.200" height="16.400" rx="2.500" fill="url(#gbtn)" stroke="#8a8a8a" stroke-width="1"/><path d="M7.700 2.700v11.800M10.300 2.700v11.800M11.500 2.700H7" fill="none" stroke="#1a1a1a" stroke-width="1.200"/><path d="M7.700 2.200H7a2.700 2.700 0 0 0 0 5.400h.7z" fill="#1a1a1a"/></svg>
<svg style="left:762px;top:132px;" width="18" height="18" viewBox="0 0 18 18"><rect x=".6" y=".6" width="16.200" height="16.400" rx="2.500" fill="url(#gbtn)" stroke="#8a8a8a" stroke-width="1"/><path d="M4.300 5.400h8v5H8" fill="none" stroke="#1a1a1a" stroke-width="1.400"/><path d="M9.300 7.800L5.800 10.400l3.500 2.600z" fill="#1a1a1a"/></svg>
<div style="left:211px;top:154px;width:1687px;height:107px;background:#ffffff;"></div>
<span class="t" style="left:222px;top:159px;font-size:11px;line-height:14px;font-family:'Liberation Mono',monospace;color:#3a88a8;letter-spacing:0.26px;">337</span>
<span class="t" style="left:308.8px;top:158px;font-size:12px;line-height:16px;font-family:'Liberation Mono',monospace;color:#1a1a1a;letter-spacing:-0.12px;">r.max_occupancy,</span>
<span class="t" style="left:222px;top:180px;font-size:11px;line-height:14px;font-family:'Liberation Mono',monospace;color:#3a88a8;letter-spacing:0.26px;">338</span>
<span class="t" style="left:308.8px;top:179px;font-size:12px;line-height:16px;font-family:'Liberation Mono',monospace;color:#1a1a1a;letter-spacing:-0.12px;">p.payment_id,</span>
<span class="t" style="left:222px;top:201px;font-size:11px;line-height:14px;font-family:'Liberation Mono',monospace;color:#3a88a8;letter-spacing:0.26px;">339</span>
<span class="t" style="left:308.8px;top:200px;font-size:12px;line-height:16px;font-family:'Liberation Mono',monospace;color:#1a1a1a;letter-spacing:-0.12px;">p.booking_id,</span>
<span class="t" style="left:222px;top:222px;font-size:11px;line-height:14px;font-family:'Liberation Mono',monospace;color:#3a88a8;letter-spacing:0.26px;">340</span>
<span class="t" style="left:308.8px;top:221px;font-size:12px;line-height:16px;font-family:'Liberation Mono',monospace;color:#1a1a1a;letter-spacing:-0.12px;">p.payment_date,</span>
<span class="t" style="left:222px;top:243px;font-size:11px;line-height:14px;font-family:'Liberation Mono',monospace;color:#3a88a8;letter-spacing:0.26px;">341</span>
<span class="t" style="left:308.8px;top:242px;font-size:12px;line-height:16px;font-family:'Liberation Mono',monospace;color:#1a1a1a;letter-spacing:-0.12px;">p.payment_amount,</span>
<div style="left:1905px;top:209px;width:2px;height:17px;background:#858585;"></div>
<div style="left:228px;top:267.5px;width:1333px;height:2.5px;background:#8a8a8a;"></div>
<div style="left:212px;top:277px;width:1702px;height:6px;background:#f7f7f7;"></div>
<div style="left:212px;top:278px;width:1702px;height:1px;background:repeating-linear-gradient(90deg,#111 0 1px,#f7f7f7 1px 2px);"></div>
<div style="left:213px;top:281px;width:1701px;height:1px;background:repeating-linear-gradient(90deg,#111 0 1px,#f7f7f7 1px 2px);"></div>
<div style="left:211px;top:283px;width:1646px;height:23px;background:#f4f4f6;"></div>
<div style="left:214.5px;top:287px;width:1px;height:15px;background:#8494b0;"></div>
<span class="t" style="left:222.3px;top:289px;font-size:10px;line-height:13px;font-weight:bold;color:#222;letter-spacing:0.08px;">Result Grid</span>
<div style="left:283.5px;top:287px;width:1px;height:15px;background:#8494b0;"></div>
<svg style="left:290px;top:288px;" width="14" height="13" viewBox="0 0 14 13"><rect x=".5" y=".5" width="12.500" height="12" fill="#f4f4f4" stroke="#9a9a9a" stroke-width="1"/><path d="M.5 3.500h12.500M.5 6.500h12.500M.5 9.500h12.500M9.500 .5v12" stroke="#b0b0b0" stroke-width=".8"/><rect x="4.500" y=".5" width="3.500" height="12" fill="#ffd83a" stroke="#c9961a" stroke-width="1"/></svg>
<svg style="left:318px;top:288px;" width="17" height="14" viewBox="0 0 17 14"><path d="M1.800 7.500a5.200 5.200 0 0 1 8.500-4.200M15 6.300a5.200 5.200 0 0 1-8.500 4.300" fill="none" stroke="#2f7fe0" stroke-width="2.600"/><path d="M8.300 0l5 3.600-5.600 2.300zM8.500 14l-5-3.600 5.600-2.300z" fill="#2f7fe0"/></svg>
<span class="t" style="left:342.5px;top:289px;font-size:10px;line-height:13px;color:#333;letter-spacing:-0.02px;">Filter Rows:</span>
<div style="left:400px;top:285px;width:98px;height:18px;background:#ffffff;box-sizing:border-box;border:1px solid #e4e4e4;border-bottom:1px solid #9a9a9a;border-radius:2px;"></div>
<div style="left:503px;top:287px;width:1px;height:15px;background:#8494b0;"></div>
<span class="t" style="left:508px;top:289px;font-size:10px;line-height:13px;color:#333;letter-spacing:0.26px;">Export:</span>
<svg style="left:549px;top:286px;" width="19" height="17" viewBox="0 0 19 17"><rect x=".5" y=".5" width="11" height="10" fill="#efefef" stroke="#b3b3b3" stroke-width=".9"/><rect x=".5" y=".5" width="11" height="2.500" fill="#cfcfcf"/><path d="M.5 3.500h11M.5 6.500h11M4 .5v10M8 .5v10" stroke="#bcbcbc" stroke-width=".7"/><path d="M6.800 5.800h9.700l1.500 1.500v8.900H6.800z" fill="#4e86b4" stroke="#3a6d99" stroke-width=".8"/><rect x="9.300" y="6.800" width="6" height="3.500" fill="#d4e4f1"/><rect x="9.800" y="12" width="5.500" height="4" fill="#e8eff5"/><rect x="13" y="12.800" width="1.500" height="2.600" fill="#3f7fb3"/></svg>
<div style="left:575px;top:287px;width:1px;height:15px;background:#8494b0;"></div>
<span class="t" style="left:580px;top:289px;font-size:10px;line-height:13px;color:#333;letter-spacing:0.12px;">Wrap Cell Content:</span>
<svg style="left:676px;top:289px;" width="14" height="13" viewBox="0 0 14 13"><path d="M1 1.500h11M1 11.500h11" stroke="#2f3f63" stroke-width="1"/><path d="M3.300 3v7" stroke="#2f3f63" stroke-width="1.100"/><path d="M3.300 2l1.900 2.300H1.400zM3.300 11l1.900-2.300H1.400z" fill="#2f3f63"/><text x="6" y="10" font-family="Liberation Sans" font-size="9" fill="#2f3f63">A</text></svg>
<svg style="left:1835px;top:287px;" width="15" height="14" viewBox="0 0 15 14"><rect x=".6" y=".6" width="12.800" height="12.800" fill="#fdfdfd" stroke="#383838" stroke-width="1.200"/><rect x="9.300" y=".6" width="4.100" height="12.800" fill="#5a5a5a"/></svg>
<div id="grid">
<div style="left:211px;top:306px;width:1629px;height:515px;background:#ffffff;"></div>
<div style="left:237px;top:344px;width:1602px;height:16px;background:#eaf1fb;"></div>
<div style="left:237px;top:378px;width:1602px;height:16px;background:#eaf1fb;"></div>
<div style="left:237px;top:412px;width:1602px;height:16px;background:#eaf1fb;"></div>
<div style="left:237px;top:446px;width:1602px;height:16px;background:#eaf1fb;"></div>
<div style="left:237px;top:480px;width:1602px;height:16px;background:#eaf1fb;"></div>
<div style="left:237px;top:514px;width:1602px;height:16px;background:#eaf1fb;"></div>
<div style="left:237px;top:548px;width:1602px;height:16px;background:#eaf1fb;"></div>
<div style="left:237px;top:582px;width:1602px;height:16px;background:#eaf1fb;"></div>
<div style="left:237px;top:616px;width:1602px;height:16px;background:#eaf1fb;"></div>
<div style="left:237px;top:650px;width:1602px;height:16px;background:#eaf1fb;"></div>
<div style="left:237px;top:684px;width:1602px;height:16px;background:#eaf1fb;"></div>
<div style="left:237px;top:718px;width:1602px;height:16px;background:#eaf1fb;"></div>
<div style="left:237px;top:752px;width:1602px;height:16px;background:#eaf1fb;"></div>
<div style="left:237px;top:786px;width:1602px;height:16px;background:#eaf1fb;"></div>
<div style="left:305px;top:327px;width:1px;height:494px;background:#ffffff;"></div>
<div style="left:305px;top:308px;width:1px;height:18px;background:#dedede;"></div>
<div style="left:384px;top:327px;width:1px;height:494px;background:#ffffff;"></div>
<div style="left:384px;top:308px;width:1px;height:18px;background:#dedede;"></div>
<div style="left:479px;top:327px;width:1px;height:494px;background:#ffffff;"></div>
<div style="left:479px;top:308px;width:1px;height:18px;background:#dedede;"></div>
<div style="left:668px;top:327px;width:1px;height:494px;background:#ffffff;"></div>
<div style="left:668px;top:308px;width:1px;height:18px;background:#dedede;"></div>
<div style="left:858px;top:327px;width:1px;height:494px;background:#ffffff;"></div>
<div style="left:858px;top:308px;width:1px;height:18px;background:#dedede;"></div>
<div style="left:964px;top:327px;width:1px;height:494px;background:#ffffff;"></div>
<div style="left:964px;top:308px;width:1px;height:18px;background:#dedede;"></div>
<div style="left:1084px;top:327px;width:1px;height:494px;background:#ffffff;"></div>
<div style="left:1084px;top:308px;width:1px;height:18px;background:#dedede;"></div>
<div style="left:1152px;top:327px;width:1px;height:494px;background:#ffffff;"></div>
<div style="left:1152px;top:308px;width:1px;height:18px;background:#dedede;"></div>
<div style="left:1238px;top:327px;width:1px;height:494px;background:#ffffff;"></div>
<div style="left:1238px;top:308px;width:1px;height:18px;background:#dedede;"></div>
<div style="left:1332px;top:327px;width:1px;height:494px;background:#ffffff;"></div>
<div style="left:1332px;top:308px;width:1px;height:18px;background:#dedede;"></div>
<div style="left:1422px;top:327px;width:1px;height:494px;background:#ffffff;"></div>
<div style="left:1422px;top:308px;width:1px;height:18px;background:#dedede;"></div>
<div style="left:1503px;top:327px;width:1px;height:494px;background:#ffffff;"></div>
<div style="left:1503px;top:308px;width:1px;height:18px;background:#dedede;"></div>
<div style="left:1558px;top:327px;width:1px;height:494px;background:#ffffff;"></div>
<div style="left:1558px;top:308px;width:1px;height:18px;background:#dedede;"></div>
<div style="left:1641px;top:327px;width:1px;height:494px;background:#ffffff;"></div>
<div style="left:1641px;top:308px;width:1px;height:18px;background:#dedede;"></div>
<div style="left:1710px;top:327px;width:1px;height:494px;background:#ffffff;"></div>
<div style="left:1710px;top:308px;width:1px;height:18px;background:#dedede;"></div>
<div style="left:1820px;top:327px;width:1px;height:494px;background:#ffffff;"></div>
<div style="left:1820px;top:308px;width:1px;height:18px;background:#dedede;"></div>
<div style="left:212px;top:343px;width:24px;height:1px;background:#e3e3e3;"></div>
<div style="left:212px;top:360px;width:24px;height:1px;background:#e3e3e3;"></div>
<div style="left:212px;top:377px;width:24px;height:1px;background:#e3e3e3;"></div>
<div style="left:212px;top:394px;width:24px;height:1px;background:#e3e3e3;"></div>
<div style="left:212px;top:411px;width:24px;height:1px;background:#e3e3e3;"></div>
<div style="left:212px;top:428px;width:24px;height:1px;background:#e3e3e3;"></div>
<div style="left:212px;top:445px;width:24px;height:1px;background:#e3e3e3;"></div>
<div style="left:212px;top:462px;width:24px;height:1px;background:#e3e3e3;"></div>
<div style="left:212px;top:479px;width:24px;height:1px;background:#e3e3e3;"></div>
<div style="left:212px;top:496px;width:24px;height:1px;background:#e3e3e3;"></div>
<div style="left:212px;top:513px;width:24px;height:1px;background:#e3e3e3;"></div>
<div style="left:212px;top:530px;width:24px;height:1px;background:#e3e3e3;"></div>
<div style="left:212px;top:547px;width:24px;height:1px;background:#e3e3e3;"></div>
<div style="left:212px;top:564px;width:24px;height:1px;background:#e3e3e3;"></div>
<div style="left:212px;top:581px;width:24px;height:1px;background:#e3e3e3;"></div>
<div style="left:212px;top:598px;width:24px;height:1px;background:#e3e3e3;"></div>
<div style="left:212px;top:615px;width:24px;height:1px;background:#e3e3e3;"></div>
<div style="left:212px;top:632px;width:24px;height:1px;background:#e3e3e3;"></div>
<div style="left:212px;top:649px;width:24px;height:1px;background:#e3e3e3;"></div>
<div style="left:212px;top:666px;width:24px;height:1px;background:#e3e3e3;"></div>
<div style="left:212px;top:683px;width:24px;height:1px;background:#e3e3e3;"></div>
<div style="left:212px;top:700px;width:24px;height:1px;background:#e3e3e3;"></div>
<div style="left:212px;top:717px;width:24px;height:1px;background:#e3e3e3;"></div>
<div style="left:212px;top:734px;width:24px;height:1px;background:#e3e3e3;"></div>
<div style="left:212px;top:751px;width:24px;height:1px;background:#e3e3e3;"></div>
<div style="left:212px;top:768px;width:24px;height:1px;background:#e3e3e3;"></div>
<div style="left:212px;top:785px;width:24px;height:1px;background:#e3e3e3;"></div>
<div style="left:212px;top:802px;width:24px;height:1px;background:#e3e3e3;"></div>
<div style="left:212px;top:819px;width:24px;height:1px;background:#e3e3e3;"></div>
<div style="left:211px;top:306px;width:1629px;height:1px;background:#8c8c8c;"></div>
<div style="left:211px;top:326px;width:1629px;height:1px;background:#8c8c8c;"></div>
<div style="left:211px;top:306px;width:1px;height:515px;background:#8c8c8c;"></div>
<div style="left:236px;top:306px;width:1px;height:515px;background:#8c8c8c;"></div>
<svg style="left:218px;top:332px;" width="6" height="10" viewBox="0 0 6 10"><path d="M0 0l5.500 4.600L0 9.200z" fill="#333"/></svg>
<div class="hr">
<span class="t g" style="left:242.8px;top:310px;">first_name</span>
<span class="t g" style="left:311.8px;top:310px;">last_name</span>
<span class="t g" style="left:390.8px;top:310px;">contact_number</span>
<span class="t g" style="left:485.8px;top:310px;">email</span>
<span class="t g" style="left:674.8px;top:310px;">address</span>
<span class="t g" style="left:864.8px;top:310px;">identification_type</span>
<span class="t g" style="left:970.8px;top:310px;">identification_number</span>
<span class="t g" style="left:1090.8px;top:310px;">booking_id</span>
<span class="t g" style="left:1158.8px;top:310px;">check_in_date</span>
<span class="t g" style="left:1244.8px;top:310px;">check_out_date</span>
<span class="t g" style="left:1338.8px;top:310px;">booking_status</span>
<span class="t g" style="left:1428.8px;top:310px;">total_amount</span>
<span class="t g" style="left:1509.8px;top:310px;">room_id</span>
<span class="t g" style="left:1564.8px;top:310px;">room_number</span>
<span class="t g" style="left:1647.8px;top:310px;">room_type</span>
<span class="t g" style="left:1716.8px;top:310px;">room_status</span>
<span class="t g" style="left:1826.8px;top:310px;">pri</span>
</div>
<div class="gr">
<span class="t g k0" style="left:239px;top:329px;">Arun</span>
<span class="t g k1" style="left:308px;top:329px;">Kumar</span>
<span class="t g k2" style="left:387.8px;top:329px;">9445000001</span>
<span class="t g k3" style="left:482px;top:329px;">arun.kumar@example.com</span>
<span class="t g k4" style="left:671px;top:329px;">12, Gandhi Street, Chennai</span>
<span class="t g k5" style="left:861px;top:329px;">Aadhar</span>
<span class="t g k6" style="left:967.4px;top:329px;">123456789012</span>
<span class="t g k7" style="left:1087.8px;top:329px;">1</span>
<span class="t g k8" style="left:1155.8px;top:329px;">2024-08-01</span>
<span class="t g k9" style="left:1241.8px;top:329px;">2024-08-05</span>
<span class="t g k10" style="left:1335px;top:329px;">Confirmed</span>
<span class="t g k11" style="left:1425.8px;top:329px;">6000</span>
<span class="t g k12" style="left:1506.8px;top:329px;">101</span>
<span class="t g k13" style="left:1561.8px;top:329px;">1</span>
<span class="t g k14" style="left:1644px;top:329px;">Single</span>
<span class="t g k15" style="left:1713px;top:329px;">Available</span>
<span class="t g k16" style="left:1825.2px;top:329px;">150</span>
</div>
<div class="gr">
<span class="t g k0" style="left:239px;top:346px;">Lakshmi</span>
<span class="t g k1" style="left:308px;top:346px;">Subramanian</span>
<span class="t g k2" style="left:387.8px;top:346px;">9445000002</span>
<span class="t g k3" style="left:482px;top:346px;">lakshmi.subramanian@example.com</span>
<span class="t g k4" style="left:671px;top:346px;">45, Anna Nagar, Madurai</span>
<span class="t g k5" style="left:861px;top:346px;">Voter ID</span>
<span class="t g k6" style="left:967.4px;top:346px;">TN12345678</span>
<span class="t g k7" style="left:1087.8px;top:346px;">2</span>
<span class="t g k8" style="left:1155.8px;top:346px;">2024-08-02</span>
<span class="t g k9" style="left:1241.8px;top:346px;">2024-08-06</span>
<span class="t g k10" style="left:1335px;top:346px;">Checked-In</span>
<span class="t g k11" style="left:1425.8px;top:346px;">10000</span>
<span class="t g k12" style="left:1506.8px;top:346px;">102</span>
<span class="t g k13" style="left:1561.8px;top:346px;">2</span>
<span class="t g k14" style="left:1644px;top:346px;">Double</span>
<span class="t g k15" style="left:1713px;top:346px;">Occupied</span>
<span class="t g k16" style="left:1825.2px;top:346px;">250</span>
</div>
<div class="gr">
<span class="t g k0" style="left:239px;top:363px;">Vijay</span>
<span class="t g k1" style="left:308px;top:363px;">Raman</span>
<span class="t g k2" style="left:387.8px;top:363px;">9445000003</span>
<span class="t g k3" style="left:482px;top:363px;">vijay.raman@example.com</span>
<span class="t g k4" style="left:671px;top:363px;">67, MG Road, Coimbatore</span>
<span class="t g k5" style="left:861px;top:363px;">Passport</span>
<span class="t g k6" style="left:967.4px;top:363px;">M1234567</span>
<span class="t g k7" style="left:1087.8px;top:363px;">3</span>
<span class="t g k8" style="left:1155.8px;top:363px;">2024-08-03</span>
<span class="t g k9" style="left:1241.8px;top:363px;">2024-08-07</span>
<span class="t g k10" style="left:1335px;top:363px;">Cancelled</span>
<span class="t g k11" style="left:1425.8px;top:363px;">0</span>
<span class="t g k12" style="left:1506.8px;top:363px;">103</span>
<span class="t g k13" style="left:1561.8px;top:363px;">3</span>
<span class="t g k14" style="left:1644px;top:363px;">Suite</span>
<span class="t g k15" style="left:1713px;top:363px;">Available</span>
<span class="t g k16" style="left:1825.2px;top:363px;">450</span>
</div>
<div class="gr">
<span class="t g k0" style="left:239px;top:380px;">Meena</span>
<span class="t g k1" style="left:308px;top:380px;">Rajendran</span>
<span class="t g k2" style="left:387.8px;top:380px;">9445000004</span>
<span class="t g k3" style="left:482px;top:380px;">meena.rajendran@example.com</span>
<span class="t g k4" style="left:671px;top:380px;">89, Kamarajar Street, Tiruchirappalli</span>
<span class="t g k5" style="left:861px;top:380px;">Aadhar</span>
<span class="t g k6" style="left:967.4px;top:380px;">234567890123</span>
<span class="t g k7" style="left:1087.8px;top:380px;">4</span>
<span class="t g k8" style="left:1155.8px;top:380px;">2024-08-04</span>
<span class="t g k9" style="left:1241.8px;top:380px;">2024-08-08</span>
<span class="t g k10" style="left:1335px;top:380px;">Confirmed</span>
<span class="t g k11" style="left:1425.8px;top:380px;">6000</span>
<span class="t g k12" style="left:1506.8px;top:380px;">104</span>
<span class="t g k13" style="left:1561.8px;top:380px;">4</span>
<span class="t g k14" style="left:1644px;top:380px;">Single</span>
<span class="t g k15" style="left:1713px;top:380px;">Under Maintenance</span>
<span class="t g k16" style="left:1825.2px;top:380px;">150</span>
</div>
<div class="gr">
<span class="t g k0" style="left:239px;top:397px;">Karthik</span>
<span class="t g k1" style="left:308px;top:397px;">Ravi</span>
<span class="t g k2" style="left:387.8px;top:397px;">9445000005</span>
<span class="t g k3" style="left:482px;top:397px;">karthik.ravi@example.com</span>
<span class="t g k4" style="left:671px;top:397px;">23, Alagappa Nagar, Salem</span>
<span class="t g k5" style="left:861px;top:397px;">Voter ID</span>
<span class="t g k6" style="left:967.4px;top:397px;">TN23456789</span>
<span class="t g k7" style="left:1087.8px;top:397px;">5</span>
<span class="t g k8" style="left:1155.8px;top:397px;">2024-08-05</span>
<span class="t g k9" style="left:1241.8px;top:397px;">2024-08-09</span>
<span class="t g k10" style="left:1335px;top:397px;">Checked-In</span>
<span class="t g k11" style="left:1425.8px;top:397px;">10000</span>
<span class="t g k12" style="left:1506.8px;top:397px;">105</span>
<span class="t g k13" style="left:1561.8px;top:397px;">5</span>
<span class="t g k14" style="left:1644px;top:397px;">Double</span>
<span class="t g k15" style="left:1713px;top:397px;">Available</span>
<span class="t g k16" style="left:1825.2px;top:397px;">250</span>
</div>
<div class="gr">
<span class="t g k0" style="left:239px;top:414px;">Revathi</span>
<span class="t g k1" style="left:308px;top:414px;">Suresh</span>
<span class="t g k2" style="left:387.8px;top:414px;">9445000006</span>
<span class="t g k3" style="left:482px;top:414px;">revathi.suresh@example.com</span>
<span class="t g k4" style="left:671px;top:414px;">56, Raja Street, Erode</span>
<span class="t g k5" style="left:861px;top:414px;">Passport</span>
<span class="t g k6" style="left:967.4px;top:414px;">N2345678</span>
<span class="t g k7" style="left:1087.8px;top:414px;">6</span>
<span class="t g k8" style="left:1155.8px;top:414px;">2024-08-06</span>
<span class="t g k9" style="left:1241.8px;top:414px;">2024-08-10</span>
<span class="t g k10" style="left:1335px;top:414px;">Cancelled</span>
<span class="t g k11" style="left:1425.8px;top:414px;">0</span>
<span class="t g k12" style="left:1506.8px;top:414px;">106</span>
<span class="t g k13" style="left:1561.8px;top:414px;">6</span>
<span class="t g k14" style="left:1644px;top:414px;">Suite</span>
<span class="t g k15" style="left:1713px;top:414px;">Occupied</span>
<span class="t g k16" style="left:1825.2px;top:414px;">450</span>
</div>
<div class="gr">
<span class="t g k0" style="left:239px;top:431px;">Prabhu</span>
<span class="t g k1" style="left:308px;top:431px;">Venkat</span>
<span class="t g k2" style="left:387.8px;top:431px;">9445000007</span>
<span class="t g k3" style="left:482px;top:431px;">prabhu.venkat@example.com</span>
<span class="t g k4" style="left:671px;top:431px;">78, Valluvar Salai, Tirunelveli</span>
<span class="t g k5" style="left:861px;top:431px;">Aadhar</span>
<span class="t g k6" style="left:967.4px;top:431px;">345678901234</span>
<span class="t g k7" style="left:1087.8px;top:431px;">7</span>
<span class="t g k8" style="left:1155.8px;top:431px;">2024-08-07</span>
<span class="t g k9" style="left:1241.8px;top:431px;">2024-08-11</span>
<span class="t g k10" style="left:1335px;top:431px;">Confirmed</span>
<span class="t g k11" style="left:1425.8px;top:431px;">6000</span>
<span class="t g k12" style="left:1506.8px;top:431px;">107</span>
<span class="t g k13" style="left:1561.8px;top:431px;">7</span>
<span class="t g k14" style="left:1644px;top:431px;">Single</span>
<span class="t g k15" style="left:1713px;top:431px;">Available</span>
<span class="t g k16" style="left:1825.2px;top:431px;">150</span>
</div>
<div class="gr">
<span class="t g k0" style="left:239px;top:448px;">Sangeetha</span>
<span class="t g k1" style="left:308px;top:448px;">Balaji</span>
<span class="t g k2" style="left:387.8px;top:448px;">9445000008</span>
<span class="t g k3" style="left:482px;top:448px;">sangeetha.balaji@example.com</span>
<span class="t g k4" style="left:671px;top:448px;">34, Muthu Street, Vellore</span>
<span class="t g k5" style="left:861px;top:448px;">Voter ID</span>
<span class="t g k6" style="left:967.4px;top:448px;">TN34567890</span>
<span class="t g k7" style="left:1087.8px;top:448px;">8</span>
<span class="t g k8" style="left:1155.8px;top:448px;">2024-08-08</span>
<span class="t g k9" style="left:1241.8px;top:448px;">2024-08-12</span>
<span class="t g k10" style="left:1335px;top:448px;">Checked-In</span>
<span class="t g k11" style="left:1425.8px;top:448px;">10000</span>
<span class="t g k12" style="left:1506.8px;top:448px;">108</span>
<span class="t g k13" style="left:1561.8px;top:448px;">8</span>
<span class="t g k14" style="left:1644px;top:448px;">Double</span>
<span class="t g k15" style="left:1713px;top:448px;">Occupied</span>
<span class="t g k16" style="left:1825.2px;top:448px;">250</span>
</div>
<div class="gr">
<span class="t g k0" style="left:239px;top:465px;">Ramesh</span>
<span class="t g k1" style="left:308px;top:465px;">Natarajan</span>
<span class="t g k2" style="left:387.8px;top:465px;">9445000009</span>
<span class="t g k3" style="left:482px;top:465px;">ramesh.natarajan@example.com</span>
<span class="t g k4" style="left:671px;top:465px;">90, Anna Salai, Thanjavur</span>
<span class="t g k5" style="left:861px;top:465px;">Passport</span>
<span class="t g k6" style="left:967.4px;top:465px;">O3456789</span>
<span class="t g k7" style="left:1087.8px;top:465px;">9</span>
<span class="t g k8" style="left:1155.8px;top:465px;">2024-08-09</span>
<span class="t g k9" style="left:1241.8px;top:465px;">2024-08-13</span>
<span class="t g k10" style="left:1335px;top:465px;">Cancelled</span>
<span class="t g k11" style="left:1425.8px;top:465px;">0</span>
<span class="t g k12" style="left:1506.8px;top:465px;">109</span>
<span class="t g k13" style="left:1561.8px;top:465px;">9</span>
<span class="t g k14" style="left:1644px;top:465px;">Suite</span>
<span class="t g k15" style="left:1713px;top:465px;">Available</span>
<span class="t g k16" style="left:1825.2px;top:465px;">450</span>
</div>
<div class="gr">
<span class="t g k0" style="left:239px;top:482px;">Mohana</span>
<span class="t g k1" style="left:308px;top:482px;">Vijayan</span>
<span class="t g k2" style="left:387.8px;top:482px;">9445000010</span>
<span class="t g k3" style="left:482px;top:482px;">mohana.vijayan@example.com</span>
<span class="t g k4" style="left:671px;top:482px;">12, KK Nagar, Chennai</span>
<span class="t g k5" style="left:861px;top:482px;">Aadhar</span>
<span class="t g k6" style="left:967.4px;top:482px;">456789012345</span>
<span class="t g k7" style="left:1087.8px;top:482px;">10</span>
<span class="t g k8" style="left:1155.8px;top:482px;">2024-08-10</span>
<span class="t g k9" style="left:1241.8px;top:482px;">2024-08-14</span>
<span class="t g k10" style="left:1335px;top:482px;">Confirmed</span>
<span class="t g k11" style="left:1425.8px;top:482px;">6000</span>
<span class="t g k12" style="left:1506.8px;top:482px;">110</span>
<span class="t g k13" style="left:1561.8px;top:482px;">10</span>
<span class="t g k14" style="left:1644px;top:482px;">Single</span>
<span class="t g k15" style="left:1713px;top:482px;">Under Maintenance</span>
<span class="t g k16" style="left:1825.2px;top:482px;">150</span>
</div>
<div class="gr">
<span class="t g k0" style="left:239px;top:499px;">Saravanan</span>
<span class="t g k1" style="left:308px;top:499px;">Perumal</span>
<span class="t g k2" style="left:387.8px;top:499px;">9445000011</span>
<span class="t g k3" style="left:482px;top:499px;">saravanan.perumal@example.com</span>
<span class="t g k4" style="left:671px;top:499px;">89, T Nagar, Chennai</span>
<span class="t g k5" style="left:861px;top:499px;">Voter ID</span>
<span class="t g k6" style="left:967.4px;top:499px;">TN45678901</span>
<span class="t g k7" style="left:1087.8px;top:499px;">11</span>
<span class="t g k8" style="left:1155.8px;top:499px;">2024-08-11</span>
<span class="t g k9" style="left:1241.8px;top:499px;">2024-08-15</span>
<span class="t g k10" style="left:1335px;top:499px;">Checked-In</span>
<span class="t g k11" style="left:1425.8px;top:499px;">10000</span>
<span class="t g k12" style="left:1506.8px;top:499px;">111</span>
<span class="t g k13" style="left:1561.8px;top:499px;">11</span>
<span class="t g k14" style="left:1644px;top:499px;">Double</span>
<span class="t g k15" style="left:1713px;top:499px;">Available</span>
<span class="t g k16" style="left:1825.2px;top:499px;">250</span>
</div>
<div class="gr">
<span class="t g k0" style="left:239px;top:516px;">Geetha</span>
<span class="t g k1" style="left:308px;top:516px;">Aravind</span>
<span class="t g k2" style="left:387.8px;top:516px;">9445000012</span>
<span class="t g k3" style="left:482px;top:516px;">geetha.aravind@example.com</span>
<span class="t g k4" style="left:671px;top:516px;">67, Raja Annamalai Puram, Chennai</span>
<span class="t g k5" style="left:861px;top:516px;">Passport</span>
<span class="t g k6" style="left:967.4px;top:516px;">P4567890</span>
<span class="t g k7" style="left:1087.8px;top:516px;">12</span>
<span class="t g k8" style="left:1155.8px;top:516px;">2024-08-12</span>
<span class="t g k9" style="left:1241.8px;top:516px;">2024-08-16</span>
<span class="t g k10" style="left:1335px;top:516px;">Cancelled</span>
<span class="t g k11" style="left:1425.8px;top:516px;">0</span>
<span class="t g k12" style="left:1506.8px;top:516px;">112</span>
<span class="t g k13" style="left:1561.8px;top:516px;">12</span>
<span class="t g k14" style="left:1644px;top:516px;">Suite</span>
<span class="t g k15" style="left:1713px;top:516px;">Occupied</span>
<span class="t g k16" style="left:1825.2px;top:516px;">450</span>
</div>
<div class="gr">
<span class="t g k0" style="left:239px;top:533px;">Dinesh</span>
<span class="t g k1" style="left:308px;top:533px;">Mohan</span>
<span class="t g k2" style="left:387.8px;top:533px;">9445000013</span>
<span class="t g k3" style="left:482px;top:533px;">dinesh.mohan@example.com</span>
<span class="t g k4" style="left:671px;top:533px;">45, Gandhi Nagar, Madurai</span>
<span class="t g k5" style="left:861px;top:533px;">Aadhar</span>
<span class="t g k6" style="left:967.4px;top:533px;">567890123456</span>
<span class="t g k7" style="left:1087.8px;top:533px;">13</span>
<span class="t g k8" style="left:1155.8px;top:533px;">2024-08-13</span>
<span class="t g k9" style="left:1241.8px;top:533px;">2024-08-17</span>
<span class="t g k10" style="left:1335px;top:533px;">Confirmed</span>
<span class="t g k11" style="left:1425.8px;top:533px;">6000</span>
<span class="t g k12" style="left:1506.8px;top:533px;">113</span>
<span class="t g k13" style="left:1561.8px;top:533px;">13</span>
<span class="t g k14" style="left:1644px;top:533px;">Single</span>
<span class="t g k15" style="left:1713px;top:533px;">Available</span>
<span class="t g k16" style="left:1825.2px;top:533px;">150</span>
</div>
<div class="gr">
<span class="t g k0" style="left:239px;top:550px;">Priya</span>
<span class="t g k1" style="left:308px;top:550px;">Karthikeyan</span>
<span class="t g k2" style="left:387.8px;top:550px;">9445000014</span>
<span class="t g k3" style="left:482px;top:550px;">priya.karthikeyan@example.com</span>
<span class="t g k4" style="left:671px;top:550px;">34, Saravanampatti, Coimbatore</span>
<span class="t g k5" style="left:861px;top:550px;">Voter ID</span>
<span class="t g k6" style="left:967.4px;top:550px;">TN56789012</span>
<span class="t g k7" style="left:1087.8px;top:550px;">14</span>
<span class="t g k8" style="left:1155.8px;top:550px;">2024-08-14</span>
<span class="t g k9" style="left:1241.8px;top:550px;">2024-08-18</span>
<span class="t g k10" style="left:1335px;top:550px;">Checked-In</span>
<span class="t g k11" style="left:1425.8px;top:550px;">10000</span>
<span class="t g k12" style="left:1506.8px;top:550px;">114</span>
<span class="t g k13" style="left:1561.8px;top:550px;">14</span>
<span class="t g k14" style="left:1644px;top:550px;">Double</span>
<span class="t g k15" style="left:1713px;top:550px;">Occupied</span>
<span class="t g k16" style="left:1825.2px;top:550px;">250</span>
</div>
<div class="gr">
<span class="t g k0" style="left:239px;top:567px;">Sundar</span>
<span class="t g k1" style="left:308px;top:567px;">Raghavan</span>
<span class="t g k2" style="left:387.8px;top:567px;">9445000015</span>
<span class="t g k3" style="left:482px;top:567px;">sundar.raghavan@example.com</span>
<span class="t g k4" style="left:671px;top:567px;">56, Race Course Road, Madurai</span>
<span class="t g k5" style="left:861px;top:567px;">Passport</span>
<span class="t g k6" style="left:967.4px;top:567px;">Q5678901</span>
<span class="t g k7" style="left:1087.8px;top:567px;">15</span>
<span class="t g k8" style="left:1155.8px;top:567px;">2024-08-15</span>
<span class="t g k9" style="left:1241.8px;top:567px;">2024-08-19</span>
<span class="t g k10" style="left:1335px;top:567px;">Cancelled</span>
<span class="t g k11" style="left:1425.8px;top:567px;">0</span>
<span class="t g k12" style="left:1506.8px;top:567px;">115</span>
<span class="t g k13" style="left:1561.8px;top:567px;">15</span>
<span class="t g k14" style="left:1644px;top:567px;">Suite</span>
<span class="t g k15" style="left:1713px;top:567px;">Available</span>
<span class="t g k16" style="left:1825.2px;top:567px;">450</span>
</div>
<div class="gr">
<span class="t g k0" style="left:239px;top:584px;">Nithya</span>
<span class="t g k1" style="left:308px;top:584px;">Selvakumar</span>
<span class="t g k2" style="left:387.8px;top:584px;">9445000016</span>
<span class="t g k3" style="left:482px;top:584px;">nithya.selvakumar@example.com</span>
<span class="t g k4" style="left:671px;top:584px;">78, Bharathi Park, Coimbatore</span>
<span class="t g k5" style="left:861px;top:584px;">Aadhar</span>
<span class="t g k6" style="left:967.4px;top:584px;">678901234567</span>
<span class="t g k7" style="left:1087.8px;top:584px;">16</span>
<span class="t g k8" style="left:1155.8px;top:584px;">2024-08-16</span>
<span class="t g k9" style="left:1241.8px;top:584px;">2024-08-20</span>
<span class="t g k10" style="left:1335px;top:584px;">Confirmed</span>
<span class="t g k11" style="left:1425.8px;top:584px;">6000</span>
<span class="t g k12" style="left:1506.8px;top:584px;">116</span>
<span class="t g k13" style="left:1561.8px;top:584px;">16</span>
<span class="t g k14" style="left:1644px;top:584px;">Single</span>
<span class="t g k15" style="left:1713px;top:584px;">Under Maintenance</span>
<span class="t g k16" style="left:1825.2px;top:584px;">150</span>
</div>
<div class="gr">
<span class="t g k0" style="left:239px;top:601px;">Gopal</span>
<span class="t g k1" style="left:308px;top:601px;">Krishnan</span>
<span class="t g k2" style="left:387.8px;top:601px;">9445000017</span>
<span class="t g k3" style="left:482px;top:601px;">gopal.krishnan@example.com</span>
<span class="t g k4" style="left:671px;top:601px;">12, Periyar Street, Tirunelveli</span>
<span class="t g k5" style="left:861px;top:601px;">Voter ID</span>
<span class="t g k6" style="left:967.4px;top:601px;">TN67890123</span>
<span class="t g k7" style="left:1087.8px;top:601px;">17</span>
<span class="t g k8" style="left:1155.8px;top:601px;">2024-08-17</span>
<span class="t g k9" style="left:1241.8px;top:601px;">2024-08-21</span>
<span class="t g k10" style="left:1335px;top:601px;">Checked-In</span>
<span class="t g k11" style="left:1425.8px;top:601px;">10000</span>
<span class="t g k12" style="left:1506.8px;top:601px;">117</span>
<span class="t g k13" style="left:1561.8px;top:601px;">17</span>
<span class="t g k14" style="left:1644px;top:601px;">Double</span>
<span class="t g k15" style="left:1713px;top:601px;">Available</span>
<span class="t g k16" style="left:1825.2px;top:601px;">250</span>
</div>
<div class="gr">
<span class="t g k0" style="left:239px;top:618px;">Anjali</span>
<span class="t g k1" style="left:308px;top:618px;">Raj</span>
<span class="t g k2" style="left:387.8px;top:618px;">9445000018</span>
<span class="t g k3" style="left:482px;top:618px;">anjali.raj@example.com</span>
<span class="t g k4" style="left:671px;top:618px;">89, LIC Colony, Salem</span>
<span class="t g k5" style="left:861px;top:618px;">Passport</span>
<span class="t g k6" style="left:967.4px;top:618px;">R6789012</span>
<span class="t g k7" style="left:1087.8px;top:618px;">18</span>
<span class="t g k8" style="left:1155.8px;top:618px;">2024-08-18</span>
<span class="t g k9" style="left:1241.8px;top:618px;">2024-08-22</span>
<span class="t g k10" style="left:1335px;top:618px;">Cancelled</span>
<span class="t g k11" style="left:1425.8px;top:618px;">0</span>
<span class="t g k12" style="left:1506.8px;top:618px;">118</span>
<span class="t g k13" style="left:1561.8px;top:618px;">18</span>
<span class="t g k14" style="left:1644px;top:618px;">Suite</span>
<span class="t g k15" style="left:1713px;top:618px;">Occupied</span>
<span class="t g k16" style="left:1825.2px;top:618px;">450</span>
</div>
<div class="gr">
<span class="t g k0" style="left:239px;top:635px;">Ravi</span>
<span class="t g k1" style="left:308px;top:635px;">Shankar</span>
<span class="t g k2" style="left:387.8px;top:635px;">9445000019</span>
<span class="t g k3" style="left:482px;top:635px;">ravi.shankar@example.com</span>
<span class="t g k4" style="left:671px;top:635px;">34, Raja Colony, Thanjavur</span>
<span class="t g k5" style="left:861px;top:635px;">Aadhar</span>
<span class="t g k6" style="left:967.4px;top:635px;">789012345678</span>
<span class="t g k7" style="left:1087.8px;top:635px;">19</span>
<span class="t g k8" style="left:1155.8px;top:635px;">2024-08-19</span>
<span class="t g k9" style="left:1241.8px;top:635px;">2024-08-23</span>
<span class="t g k10" style="left:1335px;top:635px;">Confirmed</span>
<span class="t g k11" style="left:1425.8px;top:635px;">6000</span>
<span class="t g k12" style="left:1506.8px;top:635px;">119</span>
<span class="t g k13" style="left:1561.8px;top:635px;">19</span>
<span class="t g k14" style="left:1644px;top:635px;">Single</span>
<span class="t g k15" style="left:1713px;top:635px;">Available</span>
<span class="t g k16" style="left:1825.2px;top:635px;">150</span>
</div>
<div class="gr">
<span class="t g k0" style="left:239px;top:652px;">Swetha</span>
<span class="t g k1" style="left:308px;top:652px;">Natarajan</span>
<span class="t g k2" style="left:387.8px;top:652px;">9445000020</span>
<span class="t g k3" style="left:482px;top:652px;">swetha.natarajan@example.com</span>
<span class="t g k4" style="left:671px;top:652px;">45, Gandhiji Street, Madurai</span>
<span class="t g k5" style="left:861px;top:652px;">Voter ID</span>
<span class="t g k6" style="left:967.4px;top:652px;">TN78901234</span>
<span class="t g k7" style="left:1087.8px;top:652px;">20</span>
<span class="t g k8" style="left:1155.8px;top:652px;">2024-08-20</span>
<span class="t g k9" style="left:1241.8px;top:652px;">2024-08-24</span>
<span class="t g k10" style="left:1335px;top:652px;">Checked-In</span>
<span class="t g k11" style="left:1425.8px;top:652px;">10000</span>
<span class="t g k12" style="left:1506.8px;top:652px;">120</span>
<span class="t g k13" style="left:1561.8px;top:652px;">20</span>
<span class="t g k14" style="left:1644px;top:652px;">Double</span>
<span class="t g k15" style="left:1713px;top:652px;">Occupied</span>
<span class="t g k16" style="left:1825.2px;top:652px;">250</span>
</div>
<div class="gr">
<span class="t g k0" style="left:239px;top:669px;">Manoj</span>
<span class="t g k1" style="left:308px;top:669px;">Varadhan</span>
<span class="t g k2" style="left:387.8px;top:669px;">9445000021</span>
<span class="t g k3" style="left:482px;top:669px;">manoj.varadhan@example.com</span>
<span class="t g k4" style="left:671px;top:669px;">67, Vellala Street, Chennai</span>
<span class="t g k5" style="left:861px;top:669px;">Passport</span>
<span class="t g k6" style="left:967.4px;top:669px;">S7890123</span>
<span class="t g k7" style="left:1087.8px;top:669px;">21</span>
<span class="t g k8" style="left:1155.8px;top:669px;">2024-08-21</span>
<span class="t g k9" style="left:1241.8px;top:669px;">2024-08-25</span>
<span class="t g k10" style="left:1335px;top:669px;">Confirmed</span>
<span class="t g k11" style="left:1425.8px;top:669px;">18000</span>
<span class="t g k12" style="left:1506.8px;top:669px;">201</span>
<span class="t g k13" style="left:1561.8px;top:669px;">21</span>
<span class="t g k14" style="left:1644px;top:669px;">Suite</span>
<span class="t g k15" style="left:1713px;top:669px;">Available</span>
<span class="t g k16" style="left:1825.2px;top:669px;">450</span>
</div>
<div class="gr">
<span class="t g k0" style="left:239px;top:686px;">Janaki</span>
<span class="t g k1" style="left:308px;top:686px;">Vishwanathan</span>
<span class="t g k2" style="left:387.8px;top:686px;">9445000022</span>
<span class="t g k3" style="left:482px;top:686px;">janaki.vishwanathan@example.com</span>
<span class="t g k4" style="left:671px;top:686px;">78, West Mambalam, Chennai</span>
<span class="t g k5" style="left:861px;top:686px;">Aadhar</span>
<span class="t g k6" style="left:967.4px;top:686px;">890123456789</span>
<span class="t g k7" style="left:1087.8px;top:686px;">22</span>
<span class="t g k8" style="left:1155.8px;top:686px;">2024-08-22</span>
<span class="t g k9" style="left:1241.8px;top:686px;">2024-08-26</span>
<span class="t g k10" style="left:1335px;top:686px;">Checked-In</span>
<span class="t g k11" style="left:1425.8px;top:686px;">6000</span>
<span class="t g k12" style="left:1506.8px;top:686px;">202</span>
<span class="t g k13" style="left:1561.8px;top:686px;">22</span>
<span class="t g k14" style="left:1644px;top:686px;">Single</span>
<span class="t g k15" style="left:1713px;top:686px;">Under Maintenance</span>
<span class="t g k16" style="left:1825.2px;top:686px;">150</span>
</div>
<div class="gr">
<span class="t g k0" style="left:239px;top:703px;">Vikram</span>
<span class="t g k1" style="left:308px;top:703px;">Rajan</span>
<span class="t g k2" style="left:387.8px;top:703px;">9445000023</span>
<span class="t g k3" style="left:482px;top:703px;">vikram.rajan@example.com</span>
<span class="t g k4" style="left:671px;top:703px;">12, RS Puram, Coimbatore</span>
<span class="t g k5" style="left:861px;top:703px;">Voter ID</span>
<span class="t g k6" style="left:967.4px;top:703px;">TN89012345</span>
<span class="t g k7" style="left:1087.8px;top:703px;">23</span>
<span class="t g k8" style="left:1155.8px;top:703px;">2024-08-23</span>
<span class="t g k9" style="left:1241.8px;top:703px;">2024-08-27</span>
<span class="t g k10" style="left:1335px;top:703px;">Cancelled</span>
<span class="t g k11" style="left:1425.8px;top:703px;">0</span>
<span class="t g k12" style="left:1506.8px;top:703px;">203</span>
<span class="t g k13" style="left:1561.8px;top:703px;">23</span>
<span class="t g k14" style="left:1644px;top:703px;">Double</span>
<span class="t g k15" style="left:1713px;top:703px;">Available</span>
<span class="t g k16" style="left:1825.2px;top:703px;">250</span>
</div>
<div class="gr">
<span class="t g k0" style="left:239px;top:720px;">Aishwarya</span>
<span class="t g k1" style="left:308px;top:720px;">Selvam</span>
<span class="t g k2" style="left:387.8px;top:720px;">9445000024</span>
<span class="t g k3" style="left:482px;top:720px;">aishwarya.selvam@example.com</span>
<span class="t g k4" style="left:671px;top:720px;">89, Keelkattalai, Chennai</span>
<span class="t g k5" style="left:861px;top:720px;">Passport</span>
<span class="t g k6" style="left:967.4px;top:720px;">T8901234</span>
<span class="t g k7" style="left:1087.8px;top:720px;">24</span>
<span class="t g k8" style="left:1155.8px;top:720px;">2024-08-24</span>
<span class="t g k9" style="left:1241.8px;top:720px;">2024-08-28</span>
<span class="t g k10" style="left:1335px;top:720px;">Confirmed</span>
<span class="t g k11" style="left:1425.8px;top:720px;">18000</span>
<span class="t g k12" style="left:1506.8px;top:720px;">204</span>
<span class="t g k13" style="left:1561.8px;top:720px;">24</span>
<span class="t g k14" style="left:1644px;top:720px;">Suite</span>
<span class="t g k15" style="left:1713px;top:720px;">Occupied</span>
<span class="t g k16" style="left:1825.2px;top:720px;">450</span>
</div>
<div class="gr">
<span class="t g k0" style="left:239px;top:737px;">Naveen</span>
<span class="t g k1" style="left:308px;top:737px;">Arul</span>
<span class="t g k2" style="left:387.8px;top:737px;">9445000025</span>
<span class="t g k3" style="left:482px;top:737px;">naveen.arul@example.com</span>
<span class="t g k4" style="left:671px;top:737px;">34, Adayar, Chennai</span>
<span class="t g k5" style="left:861px;top:737px;">Aadhar</span>
<span class="t g k6" style="left:967.4px;top:737px;">901234567890</span>
<span class="t g k7" style="left:1087.8px;top:737px;">25</span>
<span class="t g k8" style="left:1155.8px;top:737px;">2024-08-25</span>
<span class="t g k9" style="left:1241.8px;top:737px;">2024-08-29</span>
<span class="t g k10" style="left:1335px;top:737px;">Checked-In</span>
<span class="t g k11" style="left:1425.8px;top:737px;">6000</span>
<span class="t g k12" style="left:1506.8px;top:737px;">205</span>
<span class="t g k13" style="left:1561.8px;top:737px;">25</span>
<span class="t g k14" style="left:1644px;top:737px;">Single</span>
<span class="t g k15" style="left:1713px;top:737px;">Available</span>
<span class="t g k16" style="left:1825.2px;top:737px;">150</span>
</div>
<div class="gr">
<span class="t g k0" style="left:239px;top:754px;">Divya</span>
<span class="t g k1" style="left:308px;top:754px;">Murugan</span>
<span class="t g k2" style="left:387.8px;top:754px;">9445000026</span>
<span class="t g k3" style="left:482px;top:754px;">divya.murugan@example.com</span>
<span class="t g k4" style="left:671px;top:754px;">45, Kotturpuram, Chennai</span>
<span class="t g k5" style="left:861px;top:754px;">Voter ID</span>
<span class="t g k6" style="left:967.4px;top:754px;">TN90123456</span>
<span class="t g k7" style="left:1087.8px;top:754px;">26</span>
<span class="t g k8" style="left:1155.8px;top:754px;">2024-08-26</span>
<span class="t g k9" style="left:1241.8px;top:754px;">2024-08-30</span>
<span class="t g k10" style="left:1335px;top:754px;">Cancelled</span>
<span class="t g k11" style="left:1425.8px;top:754px;">0</span>
<span class="t g k12" style="left:1506.8px;top:754px;">206</span>
<span class="t g k13" style="left:1561.8px;top:754px;">26</span>
<span class="t g k14" style="left:1644px;top:754px;">Double</span>
<span class="t g k15" style="left:1713px;top:754px;">Occupied</span>
<span class="t g k16" style="left:1825.2px;top:754px;">250</span>
</div>
<div class="gr">
<span class="t g k0" style="left:239px;top:771px;">Kiran</span>
<span class="t g k1" style="left:308px;top:771px;">Sekar</span>
<span class="t g k2" style="left:387.8px;top:771px;">9445000027</span>
<span class="t g k3" style="left:482px;top:771px;">kiran.sekar@example.com</span>
<span class="t g k4" style="left:671px;top:771px;">67, Peelamedu, Coimbatore</span>
<span class="t g k5" style="left:861px;top:771px;">Passport</span>
<span class="t g k6" style="left:967.4px;top:771px;">U9012345</span>
<span class="t g k7" style="left:1087.8px;top:771px;">27</span>
<span class="t g k8" style="left:1155.8px;top:771px;">2024-08-27</span>
<span class="t g k9" style="left:1241.8px;top:771px;">2024-08-31</span>
<span class="t g k10" style="left:1335px;top:771px;">Confirmed</span>
<span class="t g k11" style="left:1425.8px;top:771px;">18000</span>
<span class="t g k12" style="left:1506.8px;top:771px;">207</span>
<span class="t g k13" style="left:1561.8px;top:771px;">27</span>
<span class="t g k14" style="left:1644px;top:771px;">Suite</span>
<span class="t g k15" style="left:1713px;top:771px;">Available</span>
<span class="t g k16" style="left:1825.2px;top:771px;">450</span>
</div>
<div class="gr">
<span class="t g k0" style="left:239px;top:788px;">Saraswathi</span>
<span class="t g k1" style="left:308px;top:788px;">Balan</span>
<span class="t g k2" style="left:387.8px;top:788px;">9445000028</span>
<span class="t g k3" style="left:482px;top:788px;">saraswathi.balan@example.com</span>
<span class="t g k4" style="left:671px;top:788px;">78, Saibaba Colony, Coimbatore</span>
<span class="t g k5" style="left:861px;top:788px;">Aadhar</span>
<span class="t g k6" style="left:967.4px;top:788px;">012345678901</span>
<span class="t g k7" style="left:1087.8px;top:788px;">28</span>
<span class="t g k8" style="left:1155.8px;top:788px;">2024-08-28</span>
<span class="t g k9" style="left:1241.8px;top:788px;">2024-09-01</span>
<span class="t g k10" style="left:1335px;top:788px;">Checked-In</span>
<span class="t g k11" style="left:1425.8px;top:788px;">6000</span>
<span class="t g k12" style="left:1506.8px;top:788px;">208</span>
<span class="t g k13" style="left:1561.8px;top:788px;">28</span>
<span class="t g k14" style="left:1644px;top:788px;">Single</span>
<span class="t g k15" style="left:1713px;top:788px;">Under Maintenance</span>
<span class="t g k16" style="left:1825.2px;top:788px;">150</span>
</div>
<div class="gr">
<span class="t g k0" style="left:239px;top:805px;">Muthu</span>
<span class="t g k1" style="left:308px;top:805px;">Kumar</span>
<span class="t g k2" style="left:387.8px;top:805px;">9445000029</span>
<span class="t g k3" style="left:482px;top:805px;">muthu.kumar@example.com</span>
<span class="t g k4" style="left:671px;top:805px;">12, Saibaba Street, Madurai</span>
<span class="t g k5" style="left:861px;top:805px;">Voter ID</span>
<span class="t g k6" style="left:967.4px;top:805px;">TN01234567</span>
<span class="t g k7" style="left:1087.8px;top:805px;">29</span>
<span class="t g k8" style="left:1155.8px;top:805px;">2024-08-29</span>
<span class="t g k9" style="left:1241.8px;top:805px;">2024-09-02</span>
<span class="t g k10" style="left:1335px;top:805px;">Cancelled</span>
<span class="t g k11" style="left:1425.8px;top:805px;">0</span>
<span class="t g k12" style="left:1506.8px;top:805px;">209</span>
<span class="t g k13" style="left:1561.8px;top:805px;">29</span>
<span class="t g k14" style="left:1644px;top:805px;">Double</span>
<span class="t g k15" style="left:1713px;top:805px;">Available</span>
<span class="t g k16" style="left:1825.2px;top:805px;">250</span>
</div>
<div style="left:1839px;top:306px;width:18px;height:531px;background:#f0f0f0;"></div>
<div style="left:1839px;top:307px;width:1px;height:514px;background:#ffffff;"></div>
<div style="left:1847px;top:323px;width:2px;height:278px;background:#858585;"></div>
</div>
<div style="left:211px;top:821px;width:1629px;height:16px;background:#f0f0f0;"></div>
<div style="left:228px;top:828px;width:863px;height:2px;background:#8a8a8a;"></div>
<div style="left:1856px;top:283px;width:58px;height:554px;background:#e8e8e8;"></div>
<div style="left:1856px;top:283px;width:58px;height:68px;background:#0477d3;"></div>
<svg style="left:1856px;top:310px;" width="10" height="18" viewBox="0 0 10 18"><path d="M0 0l9 9L0 18z" fill="#ffffff"/></svg>
<svg style="left:1872.8px;top:287.2px;" width="27" height="28" viewBox="0 0 27 28"><rect x="0" y="0" width="26.200" height="27.800" rx="1.200" fill="#f3f1ec"/><rect x="0" y="26" width="26.200" height="1.800" fill="#d9d5cc"/><rect x="1.900" y="3.300" width="22.400" height="22.600" fill="#0f4f95"/><rect x="1.900" y="3.300" width="22.400" height="1.500" fill="#0a3a72"/><rect x="2.9" y="6.0" width="5.800" height="1.900" fill="#fdf6e6"/><rect x="10.2" y="6.0" width="5.800" height="1.900" fill="#fdf6e6"/><rect x="17.3" y="6.0" width="5.800" height="1.900" fill="#fdf6e6"/><rect x="2.9" y="9.7" width="5.800" height="1.900" fill="#fdf6e6"/><rect x="10.2" y="9.7" width="5.800" height="1.900" fill="#fdf6e6"/><rect x="17.3" y="9.7" width="5.800" height="1.900" fill="#fdf6e6"/><rect x="2.9" y="13.799999999999999" width="5.800" height="1.900" fill="#fdf6e6"/><rect x="10.2" y="13.799999999999999" width="5.800" height="1.900" fill="#fdf6e6"/><rect x="17.3" y="13.799999999999999" width="5.800" height="1.900" fill="#fdf6e6"/><rect x="2.9" y="17.8" width="5.800" height="1.900" fill="#fdf6e6"/><rect x="10.2" y="17.8" width="5.800" height="1.900" fill="#fdf6e6"/><rect x="17.3" y="17.8" width="5.800" height="1.900" fill="#fdf6e6"/><rect x="2.9" y="21.700000000000003" width="5.800" height="1.900" fill="#fdf6e6"/><rect x="10.2" y="21.700000000000003" width="5.800" height="1.900" fill="#fdf6e6"/><rect x="17.3" y="21.700000000000003" width="5.800" height="1.900" fill="#fdf6e6"/></svg>
<span class="t" style="left:1871.4px;top:321px;font-size:10px;line-height:13px;color:#fff;letter-spacing:-0.26px;">Result</span>
<span class="t" style="left:1875.8px;top:331px;font-size:10px;line-height:13px;color:#fff;letter-spacing:-0.35px;">Grid</span>
<svg style="left:1872.8px;top:355.5px;" width="27" height="28" viewBox="0 0 27 28"><rect x="0" y="0" width="26.200" height="27.800" rx="1.200" fill="#f0f0f0"/><rect x="0" y="26.200" width="26.200" height="1.600" fill="#dadada"/><rect x="2.200" y="3.500" width="21.800" height="21.500" fill="#ececec" stroke="#d9d9d9" stroke-width="1"/><path d="M4 7h5M4 11h5M5 19h4M4 23h5" stroke="#d4d4d4" stroke-width="1"/><path d="M10 7h13M10 15h13" stroke="#d9d9d9" stroke-width="1.500"/><rect x="10.500" y="9" width="12.500" height="7" fill="#eee" stroke="#dadada" stroke-width=".8"/><path d="M10 20h6M10 23.500h13" stroke="#d4d4d4" stroke-width="1.300"/></svg>
<span class="t" style="left:1872.5px;top:388px;font-size:10px;line-height:13px;color:#7c7c7c;letter-spacing:-0.21px;">Form</span>
<span class="t" style="left:1870.5px;top:399px;font-size:10px;line-height:13px;color:#7c7c7c;letter-spacing:0.15px;">Editor</span>
<svg style="left:1872.8px;top:423.5px;" width="27" height="28" viewBox="0 0 27 28"><rect x="0" y="0" width="26.200" height="27.800" rx="1.200" fill="#f0f0f0"/><rect x="0" y="26.200" width="26.200" height="1.600" fill="#dadada"/><rect x="2.200" y="3.500" width="21.800" height="21.500" fill="#ececec" stroke="#d9d9d9" stroke-width="1"/><path d="M3 8h14M3 12h14M3 16h20M3 20h20M9 5v19M15 12v12" stroke="#d6d6d6" stroke-width="1"/><circle cx="19" cy="7" r="4.500" fill="#eee" stroke="#d2d2d2" stroke-width="1.600"/><path d="M22.500 10.500l4.500 4.500" stroke="#d2d2d2" stroke-width="2.200"/></svg>
<span class="t" style="left:1873px;top:456px;font-size:10px;line-height:13px;color:#7c7c7c;letter-spacing:0.07px;">Field</span>
<span class="t" style="left:1871px;top:466px;font-size:10px;line-height:13px;color:#7c7c7c;letter-spacing:-0.04px;">Types</span>
<svg style="left:1872.8px;top:491.5px;" width="27" height="28" viewBox="0 0 27 28"><rect x="0" y="0" width="26.200" height="27.800" rx="1.200" fill="#f0f0f0"/><rect x="0" y="26.200" width="26.200" height="1.600" fill="#dadada"/><rect x="2.200" y="3.500" width="21.800" height="21.500" fill="#ececec" stroke="#d9d9d9" stroke-width="1"/><path d="M3 8h12M3 12h12M3 16h20M3 20h20M8 5v19" stroke="#d6d6d6" stroke-width="1"/><circle cx="18.500" cy="10" r="5.500" fill="#eee" stroke="#d2d2d2" stroke-width="1.600"/><circle cx="18.500" cy="10" r="2.200" fill="none" stroke="#d2d2d2" stroke-width="1"/><path d="M21 2.500l2 2" stroke="#d2d2d2" stroke-width="1.500"/></svg>
<span class="t" style="left:1870.5px;top:525px;font-size:10px;line-height:13px;color:#7c7c7c;letter-spacing:0.05px;">Query</span>
<span class="t" style="left:1872.5px;top:535px;font-size:10px;line-height:13px;color:#7c7c7c;letter-spacing:0.14px;">Stats</span>
<svg style="left:1873px;top:561px;" width="28" height="24" viewBox="0 0 28 24"><rect x="3" y="1" width="4" height="3" fill="#e4e4e4" stroke="#d4d4d4"/><path d="M5 4v9" stroke="#d4d4d4" stroke-width="1.200"/><path d="M3 6.500h4" stroke="#d4d4d4" stroke-width="1"/><path d="M5 15.500h19" stroke="#d4d4d4" stroke-width="1.200"/><rect x="2" y="13" width="5.500" height="4.500" rx="1" fill="#ececec" stroke="#d4d4d4"/><rect x="10.500" y="13" width="5.500" height="4.500" rx="1" fill="#ececec" stroke="#d4d4d4"/><rect x="19" y="13" width="5.500" height="4.500" rx="1" fill="#ececec" stroke="#d4d4d4"/><path d="M0 21.500h26" stroke="#dadada" stroke-width="2"/></svg>
<span class="t" style="left:1863.5px;top:592px;font-size:10px;line-height:13px;color:#7c7c7c;letter-spacing:-0.1px;">Execution</span>
<span class="t" style="left:1875.5px;top:603px;font-size:10px;line-height:13px;color:#7c7c7c;letter-spacing:-0.38px;">Plan</span>
<div style="left:211px;top:837px;width:1703px;height:19px;background:#e6e6e6;"></div>
<div style="left:211px;top:837px;width:71px;height:19px;background:#ffffff;"></div>
<span class="t" style="left:218px;top:839px;font-size:11.5px;line-height:15px;color:#1b74c9;letter-spacing:-0.15px;">Result 1</span>
<svg style="left:267px;top:842.5px;" width="10" height="10" viewBox="0 0 10 10"><path d="M1.300 1.500l6.700 6.700M8 1.500l-6.700 6.700" stroke="#3a3a3a" stroke-width="1.150" fill="none"/></svg>
<svg style="left:1839px;top:840px;" width="12" height="12" viewBox="0 0 12 12"><circle cx="6" cy="6" r="5.300" fill="#2f7bd1"/><path d="M6 2.800v4" stroke="#fff" stroke-width="1.600"/><circle cx="6" cy="8.800" r=".9" fill="#fff"/></svg>
<span class="t" style="left:1859px;top:840px;font-size:11.5px;line-height:15px;color:#222;letter-spacing:-0.48px;">Read Only</span>
<div style="left:211px;top:862px;width:1703px;height:21px;background:#e6e6e6;"></div>
<span class="t" style="left:218px;top:866px;font-size:11.5px;line-height:15px;color:#6d7280;letter-spacing:-0.25px;">Output</span>
<div style="left:258px;top:870px;width:1652px;height:1px;background:repeating-linear-gradient(90deg,#ababab 0 1px,transparent 1px 4px);"></div><div style="left:256px;top:872px;width:1654px;height:1px;background:repeating-linear-gradient(90deg,#ababab 0 1px,transparent 1px 4px);"></div><div style="left:258px;top:874px;width:1652px;height:1px;background:repeating-linear-gradient(90deg,#ababab 0 1px,transparent 1px 4px);"></div>
<div style="left:211px;top:883px;width:1703px;height:27px;background:#f4f4f6;"></div>
<svg style="left:218px;top:890px;" width="16" height="16" viewBox="0 0 16 16"><path d="M4.500 3.500v-2h9v10h-2" fill="none" stroke="#444" stroke-width="1"/><path d="M2.500 5.500v-2h9v10h-2" fill="none" stroke="#444" stroke-width="1"/><rect x=".5" y="5.500" width="9" height="10" fill="#fff" stroke="#444" stroke-width="1"/></svg>
<div style="left:239px;top:887px;width:150px;height:21px;background:#ffffff;"></div>
<div style="left:377px;top:887px;width:12px;height:21px;background:#f0f0f0;"></div>
<span class="t" style="left:243px;top:890px;font-size:12px;line-height:16px;color:#111;letter-spacing:-0.67px;">Action Output</span>
<svg style="left:378.5px;top:895px;" width="8" height="5" viewBox="0 0 8 5"><path d="M.5 .5h6L3.500 4z" fill="#111"/></svg>
<div style="left:211px;top:910px;width:1703px;height:116px;background:#ffffff;"></div>
<div style="left:232px;top:911px;width:1px;height:17px;background:#dcdcdc;"></div>
<div style="left:268px;top:911px;width:1px;height:17px;background:#dcdcdc;"></div>
<div style="left:319px;top:911px;width:1px;height:17px;background:#dcdcdc;"></div>
<div style="left:1059px;top:911px;width:1px;height:17px;background:#dcdcdc;"></div>
<div style="left:1800px;top:911px;width:1px;height:17px;background:#dcdcdc;"></div>
<div style="left:1913px;top:911px;width:1px;height:17px;background:#dcdcdc;"></div>
<span class="t" style="left:239px;top:914px;font-size:9.5px;line-height:12px;color:#222;">#</span>
<span class="t" style="left:275px;top:914px;font-size:9.5px;line-height:12px;color:#222;letter-spacing:0.31px;">Time</span>
<span class="t" style="left:326px;top:914px;font-size:9.5px;line-height:12px;color:#222;letter-spacing:0.27px;">Action</span>
<span class="t" style="left:1065.5px;top:914px;font-size:9.5px;line-height:12px;color:#222;letter-spacing:-0.01px;">Message</span>
<span class="t" style="left:1807px;top:914px;font-size:9.5px;line-height:12px;color:#222;letter-spacing:0.28px;">Duration / Fetch</span>
<svg style="left:216px;top:933.5px;" width="12" height="12" viewBox="0 0 12 12"><circle cx="5.800" cy="5.800" r="5.400" fill="#1d9a2a" stroke="#107a1c" stroke-width=".7"/><path d="M3 6l2.100 2.200 3.900-4.300" fill="none" stroke="#fff" stroke-width="1.700"/></svg>
<span class="t" style="left:258.5px;top:930px;font-size:12px;line-height:16px;color:#111;">1</span>
<span class="t" style="left:272px;top:930px;font-size:12px;line-height:16px;color:#111;letter-spacing:-0.53px;">17:14:27</span>
<span class="t" style="left:322px;top:930px;font-size:12px;line-height:16px;color:#111;letter-spacing:-0.61px;">use project</span>
<span class="t" style="left:1063px;top:930px;font-size:12px;line-height:16px;color:#111;letter-spacing:-0.6px;">0 row(s) affected</span>
<span class="t" style="left:1804px;top:930px;font-size:12px;line-height:16px;color:#111;letter-spacing:-0.61px;">0.000 sec</span>
<div style="left:212px;top:951px;width:20px;height:21px;background:#eaf1fb;"></div>
<div style="left:233px;top:951px;width:35px;height:21px;background:#eaf1fb;"></div>
<div style="left:269px;top:951px;width:50px;height:21px;background:#eaf1fb;"></div>
<div style="left:320px;top:951px;width:739px;height:21px;background:#eaf1fb;"></div>
<div style="left:1060px;top:951px;width:740px;height:21px;background:#eaf1fb;"></div>
<div style="left:1801px;top:951px;width:112px;height:21px;background:#eaf1fb;"></div>
<svg style="left:216px;top:955.5px;" width="12" height="12" viewBox="0 0 12 12"><circle cx="5.800" cy="5.800" r="5.400" fill="#1d9a2a" stroke="#107a1c" stroke-width=".7"/><path d="M3 6l2.100 2.200 3.900-4.300" fill="none" stroke="#fff" stroke-width="1.700"/></svg>
<span class="t" style="left:258px;top:952px;font-size:12px;line-height:16px;color:#111;">2</span>
<span class="t" style="left:272px;top:952px;font-size:12px;line-height:16px;color:#111;letter-spacing:-0.53px;">17:15:06</span>
<span class="t" style="left:323px;top:952px;font-size:12px;line-height:16px;color:#111;letter-spacing:-0.79px;">SELECT G.first_name,</span>
<span class="t" style="left:443.5px;top:952px;font-size:12px;line-height:16px;color:#111;letter-spacing:-0.74px;">G.last_name,</span>
<span class="t" style="left:520.5px;top:952px;font-size:12px;line-height:16px;color:#111;letter-spacing:-0.55px;">G.contact_number,</span>
<span class="t" style="left:626.5px;top:952px;font-size:12px;line-height:16px;color:#111;letter-spacing:-0.71px;">G.email,</span>
<span class="t" style="left:679.5px;top:952px;font-size:12px;line-height:16px;color:#111;letter-spacing:-0.67px;">G.address,</span>
<span class="t" style="left:745.5px;top:952px;font-size:12px;line-height:16px;color:#111;letter-spacing:-0.55px;">G.identification_type,</span>
<span class="t" style="left:859.5px;top:952px;font-size:12px;line-height:16px;color:#111;letter-spacing:-0.55px;">G.identification_number, B.booking_id, ...</span>
<span class="t" style="left:1063px;top:952px;font-size:12px;line-height:16px;color:#111;letter-spacing:-0.75px;">50 row(s) returned</span>
<span class="t" style="left:1804px;top:952px;font-size:12px;line-height:16px;color:#111;letter-spacing:-0.43px;">0.031 sec / 0.000 sec</span>
</div>
<div class="sec" id="taskbar">
<div style="left:0px;top:1032px;width:1920px;height:48px;background:#1d1d1d;"></div>
<svg style="left:610px;top:1045px;" width="23" height="23" viewBox="0 0 23 23"><defs><linearGradient id="gwin" x1="0" y1="0" x2="1" y2="1"><stop offset="0" stop-color="#7fdcfc"/><stop offset="1" stop-color="#0b96e8"/></linearGradient></defs><path d="M0 0h11v11H0zM12 0h11v11H12zM0 12h11v11H0zM12 12h11v11H12z" fill="url(#gwin)"/></svg>
<div style="left:647px;top:1040px;width:100px;height:32px;background:#2c2c2c;border-radius:16px;"></div>
<svg style="left:669px;top:1049px;" width="16" height="16" viewBox="0 0 16 16"><circle cx="6.300" cy="6.300" r="5" fill="none" stroke="#fff" stroke-width="1.500"/><path d="M10 10l4.500 4.500" stroke="#fff" stroke-width="1.600" stroke-linecap="round"/></svg>
<span class="t" style="left:689.3px;top:1049px;font-size:12.5px;line-height:16px;color:#fff;letter-spacing:-0.6px;-webkit-text-stroke:0.35px #fff;">Search</span>
<svg style="left:760px;top:1044px;" width="24" height="24" viewBox="0 0 24 24"><circle cx="12" cy="12" r="11.700" fill="#fff"/><path d="M1.87 6.15A11.7 11.7 0 0 1 22.13 6.15L9.30 7.32A5.4 5.4 0 0 0 9.30 16.68z" fill="#ea4335"/><path d="M22.13 6.15A11.7 11.7 0 0 1 12.00 23.70L17.40 12.00A5.4 5.4 0 0 0 9.30 7.32z" fill="#fbbc04"/><path d="M12.00 23.70A11.7 11.7 0 0 1 1.87 6.15L9.30 16.68A5.4 5.4 0 0 0 17.40 12.00z" fill="#34a853"/><circle cx="12" cy="12" r="5.400" fill="#fff"/><circle cx="12" cy="12" r="4.300" fill="#4285f4"/></svg>
<div style="left:769px;top:1072px;width:6px;height:3px;background:#8c8c8c;border-radius:1.500px;"></div>
<svg style="left:804px;top:1044px;" width="24" height="24" viewBox="0 0 24 24"><defs><linearGradient id="ge1" x1="0" y1="0" x2="0" y2="1"><stop offset="0" stop-color="#2fc0e8"/><stop offset=".5" stop-color="#1a8fe0"/><stop offset="1" stop-color="#0c5aa8"/></linearGradient><linearGradient id="ge2" x1="0" y1="0" x2="1" y2="0"><stop offset="0" stop-color="#2bb8e0"/><stop offset=".6" stop-color="#3fd18a"/><stop offset="1" stop-color="#7be052"/></linearGradient></defs><circle cx="12" cy="12" r="11.800" fill="url(#ge1)"/><path d="M.8 9.500C2.500 3.800 7 .2 12.300 .2c6.200 0 11.200 4.600 11.500 10.300.2 3.200-2 5.200-5 5.200-2.500 0-4.300-1-4.300-2.500 0-.8.500-1.300.5-2.200 0-1.800-1.800-3.200-4.500-3.200-4 0-7.700 3-9.700 1.700z" fill="url(#ge2)"/><path d="M10 8c-3 0-5 2.500-5 5.500 0 4.500 3.500 8.500 8.500 9.500-4.500-3-5-7.500-3.500-10 1-1.500 2.500-2 4-2-.5-2-2-3-4-3z" fill="#1672c9" opacity=".55"/><path d="M14.500 11c-1.800 0-3 1.300-3 3 0 2.500 2.500 4.800 6 4.800 1.800 0 3.800-.6 5.200-1.800-1.500 1-3.500 1.200-5 .2-1.500-1-1.800-2.800-.7-4 .600-.600.300-2.200-2.500-2.200z" fill="#1c1c1c"/><path d="M3.500 17c2 4.500 6.500 7 11 6.500 3.500-.4 6.500-2.500 8-5.500-2 2-5 2.800-8 2-4-.9-6.500-4-6.500-7.500-2.500 0-4.500 2-4.500 4.500z" fill="#0f4f9e" opacity=".75"/></svg>
<svg style="left:848px;top:1044px;" width="24" height="24" viewBox="0 0 24 24"><defs><linearGradient id="gc1" x1="0" y1="0" x2=".3" y2="1"><stop offset="0" stop-color="#2a9df0"/><stop offset=".45" stop-color="#38c79a"/><stop offset=".8" stop-color="#f2c53a"/><stop offset="1" stop-color="#f08a3a"/></linearGradient><linearGradient id="gc2" x1=".7" y1="0" x2=".3" y2="1"><stop offset="0" stop-color="#9b7bf5"/><stop offset=".5" stop-color="#e05fc0"/><stop offset="1" stop-color="#f58a4a"/></linearGradient><linearGradient id="gc3" x1="0" y1="0" x2="1" y2="1"><stop offset="0" stop-color="#2b7fe8"/><stop offset="1" stop-color="#1c3fb0"/></linearGradient></defs><path d="M9 1.500h5.500c1.800 0 3 1 3.500 2.800l.8 3h-3l-1.200 4.200H8.500L9.800 6c.4-1.500.2-3-0.800-4.500z" fill="url(#gc3)"/><path d="M8.500 1.500c1.800 0 2.800 1.200 2.300 3L8 14c-.5 1.800-1.800 2.800-3.500 2.800H3c-2 0-3-1.500-2.500-3.500l1.800-7C3 3.500 5 1.500 7.500 1.500z" fill="url(#gc1)"/><path d="M15.500 22.500c-1.800 0-2.800-1.200-2.300-3L16 10c.5-1.800 1.800-2.800 3.500-2.800H21c2 0 3 1.500 2.500 3.500l-1.800 7c-.7 2.800-2.700 4.800-5.200 4.800z" fill="url(#gc2)"/><path d="M15 22.500H9.500c-1.800 0-3-1-3.500-2.800l-.8-3h3l1.200-4.200h6.100L14.200 18c-.4 1.500-.2 3 .8 4.500z" fill="#f2644a"/></svg>
<svg style="left:892px;top:1045px;" width="25" height="22" viewBox="0 0 25 22"><defs><linearGradient id="gfo" x1="0" y1="0" x2="0" y2="1"><stop offset="0" stop-color="#ffe07a"/><stop offset="1" stop-color="#f7c43c"/></linearGradient></defs><path d="M.3 1.800C.3.800 1 .2 1.800.2h6.500l2.500 2.600h12c.8 0 1.500.6 1.500 1.500v2H.3z" fill="#e3a01f"/><rect x=".3" y="3.800" width="24" height="17.800" rx="1.300" fill="url(#gfo)"/><path d="M5 21.600v-5.800c0-.9.700-1.500 1.500-1.500h11.500c.8 0 1.500.6 1.500 1.500v5.800z" fill="#1f86e0"/><rect x="8" y="16.300" width="8.500" height="1.700" rx=".8" fill="#1565b8"/></svg>
<div style="left:901px;top:1072px;width:6px;height:3px;background:#8c8c8c;border-radius:1.500px;"></div>
<svg style="left:937px;top:1045px;" width="22" height="23" viewBox="0 0 22 23"><path d="M11 .3l10 5.500v11L11 22.500 1 16.800v-11z" fill="#31353b"/><path d="M11 .3l10 5.500-10 4.500L1 5.800z" fill="#8d949d"/><path d="M1 5.800v11l10 5.700V10.300z" fill="#4b5159"/><path d="M11 10.300l10-4.500v11L11 22.500z" fill="#23262b"/><path d="M11.500 3.500l6 10.500-11.500 1.500z" fill="#1b1d21"/><path d="M6 15.500l11.500-1.500-6.500 4.500z" fill="#c9ced4"/><path d="M11.500 3.500L6 15.500 3.500 10z" fill="#a9afb7"/></svg>
<svg style="left:980px;top:1043px;" width="24" height="26" viewBox="0 0 24 26"><path d="M7 6V4.500C7 2.500 8.500 1.500 10 1.500h4c1.500 0 3 1 3 3V6" fill="none" stroke="#2f9be8" stroke-width="1.800"/><path d="M1 6.500h22v15c0 1.500-1 2.500-2.500 2.500h-17C2 24 1 23 1 21.500z" fill="#f4f6f8"/><rect x="7" y="10" width="4.500" height="4.500" fill="#f25022"/><rect x="12.500" y="10" width="4.500" height="4.500" fill="#7fba00"/><rect x="7" y="15.500" width="4.500" height="4.500" fill="#00a4ef"/><rect x="12.500" y="15.500" width="4.500" height="4.500" fill="#ffb900"/></svg>
<svg style="left:1024px;top:1044px;" width="24" height="24" viewBox="0 0 24 24"><rect width="24" height="24" rx="1" fill="#107c10"/><circle cx="12" cy="12" r="9.500" fill="#fff"/><path d="M12 7c-2-1.800-4-2.300-5-2 1.400-1.200 3.200-1.800 5-1.800s3.600.6 5 1.800c-1-.3-3 .2-5 2z" fill="#107c10"/><path d="M12 10c2.500 2 5 5 5.500 8-1.500 1.400-3.500 2.300-5.500 2.300S8 19.400 6.500 18c.5-3 3-6 5.500-8z" fill="#107c10"/><path d="M5.500 6.500c1 0 2.500 1 4 2.500-2 2.300-3.500 5-3.700 7.500A9.400 9.400 0 0 1 5.500 6.500zM18.500 6.500c-1 0-2.500 1-4 2.500 2 2.300 3.500 5 3.700 7.500a9.400 9.400 0 0 0 .3-10z" fill="#107c10"/></svg>
<svg style="left:1068px;top:1043px;" width="24" height="25" viewBox="0 0 24 25"><defs><radialGradient id="gff" cx=".72" cy=".12" r="1.050"><stop offset="0" stop-color="#fff36b"/><stop offset=".3" stop-color="#ffbd2e"/><stop offset=".6" stop-color="#ff6a1f"/><stop offset=".85" stop-color="#f0246a"/><stop offset="1" stop-color="#c0249e"/></radialGradient><radialGradient id="gff2" cx=".5" cy=".3" r=".7"><stop offset="0" stop-color="#b43cf0"/><stop offset="1" stop-color="#5a4ae8"/></radialGradient></defs><path d="M14 1c1.500 2 3.500 3 5.500 5.500 2.500 2.500 4 5.500 3.500 9.500-.7 5-5 8.500-11 8.500S1 20.500 1 14.500C1 11 2 8.500 4 6.500c0 1.200.3 2 1 2.800.5-1.800 1.500-3 3-3.800-.3 1 0 1.800.5 2.300C10 5.500 12.500 4 14 1z" fill="url(#gff)"/><circle cx="12" cy="13.500" r="5.200" fill="url(#gff2)"/><path d="M6 10.500c2-1.800 5.500-2 8.500-.5-2-.2-3.300.3-3.800 1.500-1.500.3-3.200 0-4.700-1z" fill="#ffa82a"/></svg>
<svg style="left:1111px;top:1043px;" width="26" height="26" viewBox="0 0 26 26"><path d="M13 2a10.800 10.800 0 0 0-9.300 16.300L1.800 24.300l6.200-1.700A10.800 10.800 0 1 0 13 2z" fill="none" stroke="#25d366" stroke-width="2.300" stroke-linejoin="round"/><path d="M8.500 7.200c-1.200 1-1.600 2.500-1 4.300 1.200 3.500 4 6.300 7.500 7.300 1.700.5 3.100-.1 4-1.400l-.4-1.700-2.800-1-1.200 1.200c-1.800-.7-3.400-2.300-4.100-4.100l1.100-1.200-1.100-2.900z" fill="#25d366"/><circle cx="21.800" cy="3.800" r="9" fill="#1c1c1c"/><circle cx="21.800" cy="3.800" r="7.900" fill="#4cc2ff"/><path d="M23.300 .2v7.200h-1.800V2.600l-1.700 1.100V2.100L22 .2z" fill="#0b3554"/></svg>
<svg style="left:1156px;top:1044px;" width="24" height="24" viewBox="0 0 24 24"><defs><linearGradient id="gma" x1="0" y1="1" x2="1" y2="0"><stop offset="0" stop-color="#5a38f0"/><stop offset=".5" stop-color="#2f6cf5"/><stop offset="1" stop-color="#08a4ff"/></linearGradient></defs><rect width="24.200" height="24.200" fill="url(#gma)"/><path d="M3.200 17.500L9.300 6.300h3.400L6.600 17.500zM9.800 17.500l6.100-11.200h3.600l.3 11.200h-3l-.1-6.500-3.500 6.500z" fill="#fff" opacity=".95"/><circle cx="16.400" cy="16.500" r="1" fill="#fff"/></svg>
<svg style="left:1203px;top:1043px;" width="19" height="26" viewBox="0 0 19 26"><defs><linearGradient id="gnp" x1="0" y1="0" x2="0" y2="1"><stop offset="0" stop-color="#9be6fa"/><stop offset="1" stop-color="#46b3dc"/></linearGradient></defs><rect x="0" y="2" width="18.400" height="21" rx="1" fill="url(#gnp)"/><rect x="0" y="21.300" width="18.400" height="1.400" fill="#f4f4f4"/><path d="M0 22.700h18.400v1.500c0 .5-.4.900-.9.900H.9c-.5 0-.9-.4-.9-.9z" fill="#b85a10"/><path d="M3.200 .8v2.800M7.200 .8v2.800M11.200 .8v2.800M15.200 .8v2.800" stroke="#0a6a94" stroke-width="1.700" stroke-linecap="round"/><path d="M3.300 7.900h11.800M3.300 12h11.800M3.300 16h11.800" stroke="#0a7aa8" stroke-width="1.700"/></svg>
<svg style="left:1244px;top:1044px;" width="24" height="24" viewBox="0 0 24 24"><circle cx="12" cy="12" r="11.500" fill="#1ed760"/><path d="M5.500 8.500c4.500-1.300 9.500-.9 13.500 1.300M6.300 12.300c3.800-1 7.800-.6 11 1.200M7.200 15.800c3-.7 6-.4 8.600 1" fill="none" stroke="#1c1c1c" stroke-width="1.900" stroke-linecap="round"/></svg>
<div style="left:1253px;top:1072px;width:6px;height:3px;background:#8c8c8c;border-radius:1.500px;"></div>
<div style="left:1280px;top:1036px;width:40px;height:40px;background:#2d2d2d;border-radius:5px;box-shadow:inset 0 1px 0 #3a3a3a;"></div>
<svg style="left:1288px;top:1044px;" width="24" height="24" viewBox="0 0 24 24"><defs><linearGradient id="gwb" x1="0" y1="0" x2="0" y2="1"><stop offset="0" stop-color="#306e9b"/><stop offset="1" stop-color="#1e4d77"/></linearGradient></defs><rect width="23.700" height="24" rx="3" fill="url(#gwb)"/><path d="M2.900 4.400C4 3 5.500 2.700 7 3.200c2.500.8 5 3.300 7.500 6.300 2 2.500 3.500 5 4.500 7l2.500 3.500-2.200-1.200-.5-1.600c-1.300-.2-2.800-1.200-4.600-3-1.700-1.900-3.200-3.400-4.700-4.200l-1 1.500.7 4-1.700-1.500-.6 1.500c-.4-2.500-1.100-4.500-2.200-6.400C4 7.500 3.500 6 2.900 4.400z" fill="none" stroke="#e3edf4" stroke-width=".9" stroke-linejoin="round"/><path d="M16.800 3.300l4.500 3.300M19.800 2.500l-1.200 3.300" stroke="#e3edf4" stroke-width="1.200" fill="none" stroke-linecap="round"/></svg>
<div style="left:1292px;top:1072.2px;width:16.2px;height:2.8px;background:#4cc2ff;border-radius:1.400px;"></div>
<svg style="left:1652px;top:1052px;" width="13" height="8" viewBox="0 0 13 8"><path d="M1 7l5.300-5.500L11.600 7" fill="none" stroke="#fff" stroke-width="1.400"/></svg>
<svg style="left:1681px;top:1049px;" width="18" height="15" viewBox="0 0 18 15"><path d="M4 12.500h10a3 3 0 0 0 .5-6 4.500 4.500 0 0 0-8.500-1A3.600 3.600 0 0 0 4 12.500z" fill="#8b8b8b"/><path d="M3.500 1.500l11.500 12" stroke="#1c1c1c" stroke-width="2.400"/><path d="M3.500 1.500l11.500 12" stroke="#bdbdbd" stroke-width="1"/></svg>
<span class="t" style="left:1716.5px;top:1042px;font-size:11.5px;line-height:15px;color:#fff;letter-spacing:-0.64px;">ENG</span>
<span class="t" style="left:1721.5px;top:1058px;font-size:11.5px;line-height:15px;color:#fff;letter-spacing:0.25px;">IN</span>
<svg style="left:1758px;top:1049px;" width="17" height="13" viewBox="0 0 17 13"><path d="M1.200 4.800a10.500 10.500 0 0 1 14.600 0" fill="none" stroke="#6a6a6a" stroke-width="1.300"/><path d="M3.500 7.300a7 7 0 0 1 10 0M5.800 9.600a3.800 3.800 0 0 1 5.400 0" fill="none" stroke="#fff" stroke-width="1.400"/><circle cx="8.500" cy="11.500" r="1.100" fill="#fff"/></svg>
<svg style="left:1781px;top:1049px;" width="18" height="14" viewBox="0 0 18 14"><path d="M1 5h2.800L7.500 1.500v11L3.800 9H1z" fill="none" stroke="#fff" stroke-width="1.100" stroke-linejoin="round"/><path d="M9.800 4.500a3.500 3.500 0 0 1 0 5M11.800 2.700a6 6 0 0 1 0 8.600M13.800 1a8.500 8.500 0 0 1 0 12" fill="none" stroke="#fff" stroke-width="1.100" stroke-linecap="round"/></svg>
<svg style="left:1806px;top:1051px;" width="17" height="11" viewBox="0 0 17 11"><rect x=".7" y=".7" width="13.600" height="8.600" rx="2" fill="none" stroke="#fff" stroke-width="1.300"/><rect x="2.500" y="2.500" width="4" height="5" rx=".5" fill="#fff"/><path d="M15.500 3.500v3" stroke="#fff" stroke-width="1.600" stroke-linecap="round"/></svg>
<span class="t" style="left:1851px;top:1040px;font-size:12px;line-height:16px;color:#fff;letter-spacing:-0.23px;">05:15 PM</span>
<span class="t" style="left:1838.8px;top:1056px;font-size:12px;line-height:16px;color:#fff;letter-spacing:0.03px;">08-01-2025</span>
</div>
</body></html>
